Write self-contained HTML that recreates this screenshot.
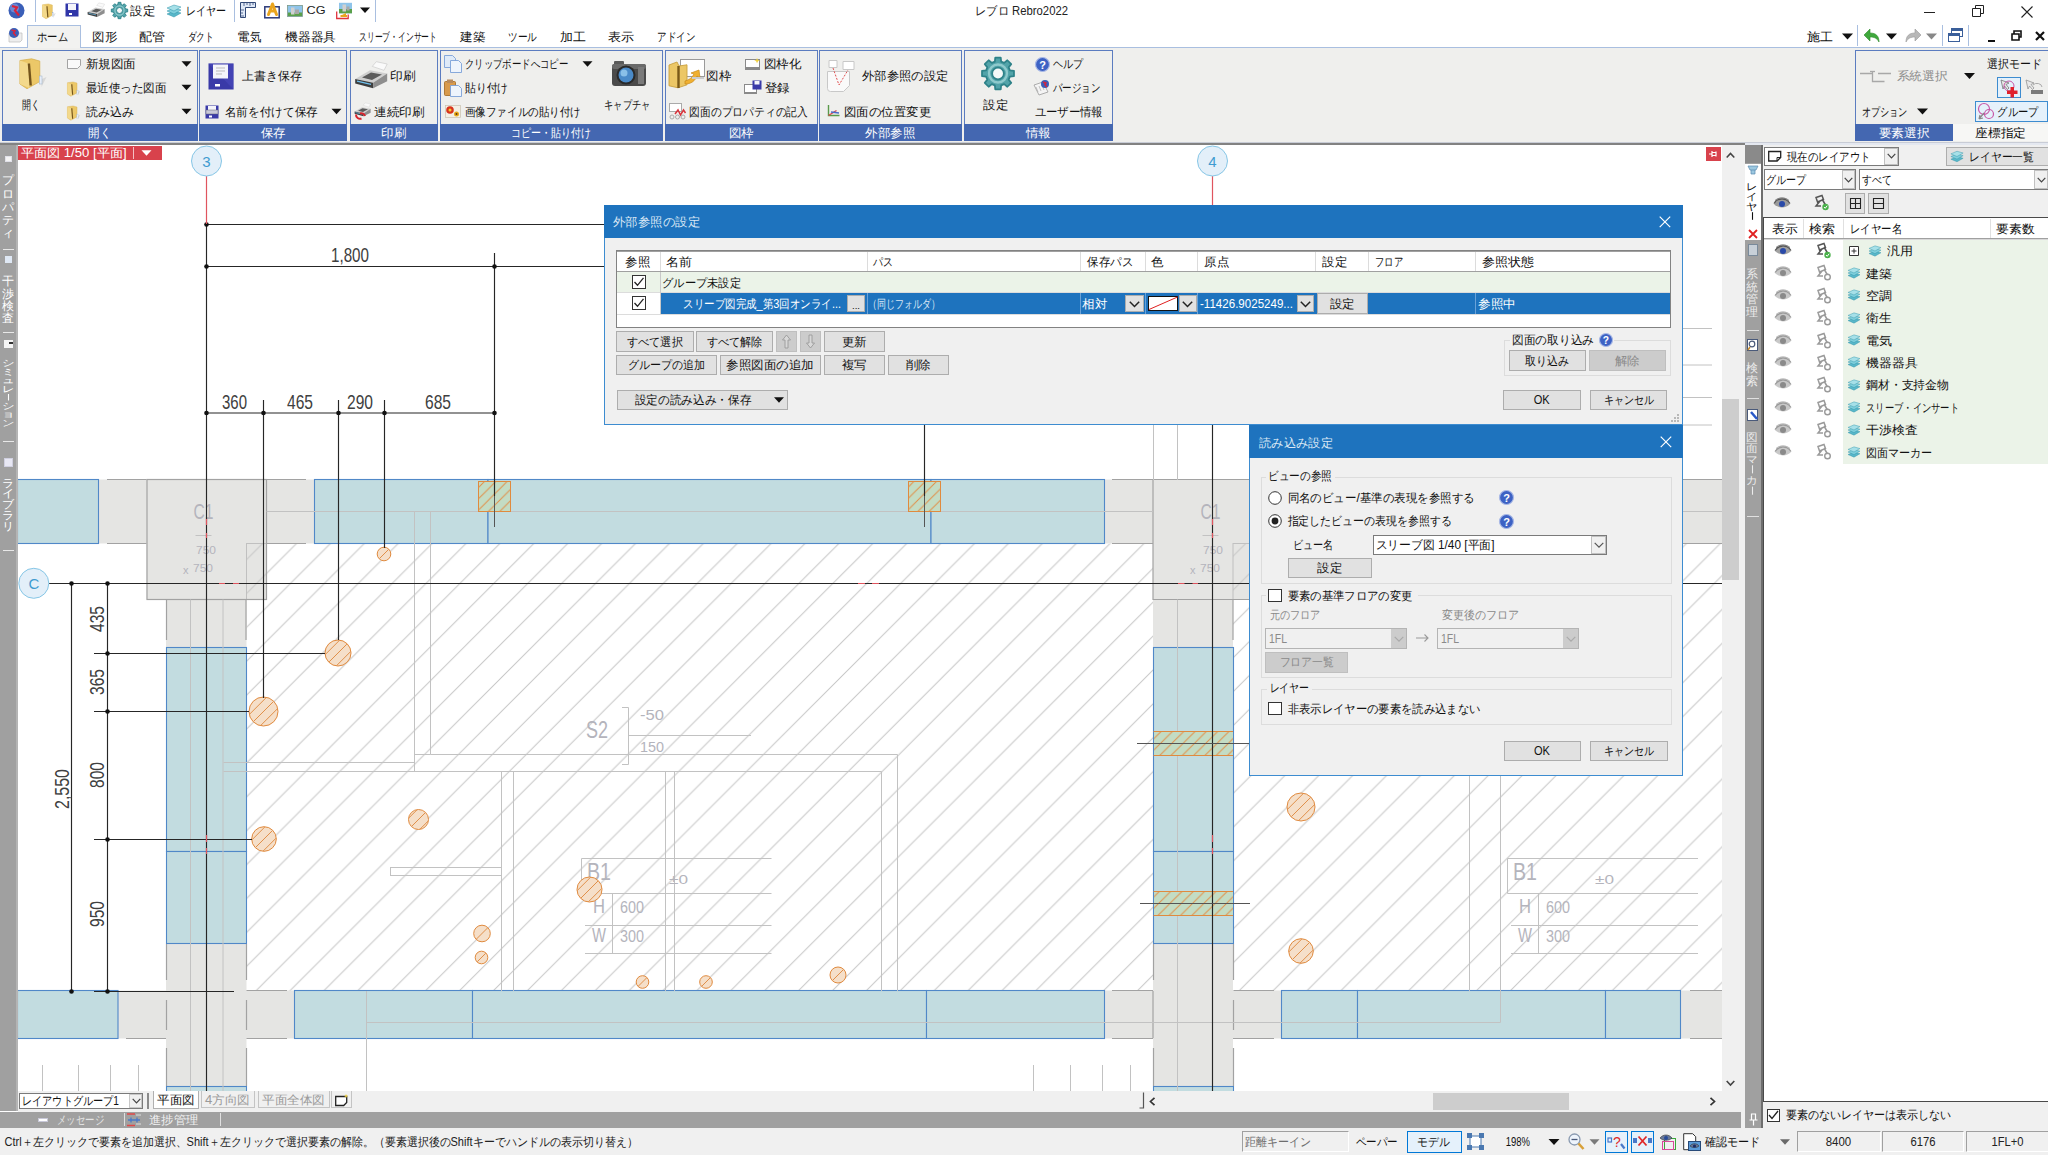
<!DOCTYPE html>
<html lang="ja">
<head>
<meta charset="utf-8">
<title>Rebro2022</title>
<style>
*{box-sizing:border-box;margin:0;padding:0}
html,body{width:2048px;height:1155px;overflow:hidden;background:#fff}
body{position:relative;font-family:"Liberation Sans",sans-serif;font-size:13px;color:#111;line-height:1}
.a{position:absolute}
svg{position:absolute;overflow:visible}
svg.tl{pointer-events:none}
</style>
</head>
<body>
<div class="a" style="left:0px;top:0px;width:2048px;height:24px;background:#fff;"></div>
<svg style="left:8px;top:2px" width="17" height="17"><circle cx="8.500" cy="8.500" r="8" fill="#3a5fb8"/><circle cx="6.500" cy="6" r="4.500" fill="#7f9be0" opacity=".7"/><path d="M4 4l5 1.500-2 3 4 5" stroke="#d8243c" stroke-width="2.200" fill="none"/></svg>
<div class="a" style="left:35px;top:0px;width:1px;height:22px;background:#a9bfe0;"></div>
<div class="a" style="left:234px;top:0px;width:1px;height:22px;background:#a9bfe0;"></div>
<div class="a" style="left:375px;top:0px;width:1px;height:22px;background:#a9bfe0;"></div>
<svg style="left:42px;top:2.5px" width="14" height="16.5" viewBox="0 0 28 33"><path d="M23 22l4.500-2-5 10z" fill="#c8c8c8" opacity=".6"/><path d="M.9 3.500l11.700-1.700 8.200 2.300v20.500l-12.800 7.100-7.100-4.700z" fill="#ecc868" stroke="#d4ac48" stroke-width=".7"/><path d="M.9 3.500l8.500 3 .9 24.500-9.400-4z" fill="#f3d98c"/><path d="M9.900 6.500l1.800 22" stroke="#73541c" stroke-width="2.400"/><rect x="20.300" y="19" width="2.700" height="8" fill="#e8eef8" stroke="#9ab0c8" stroke-width=".5"/></svg>
<svg style="left:65px;top:3px" width="14" height="14"><rect x=".5" y=".5" width="13" height="13" fill="#3036a8"/><rect x="3" y="1" width="8" height="6" fill="#f4f4fa"/><rect x="4" y="10" width="3" height="2" fill="#fff"/></svg>
<svg style="left:87px;top:2px" width="18" height="16"><g transform="scale(.53)"><path d="M18.300 6.400l4-4.700 10.900 2.300-3.200 6.300z" fill="#fafafa" stroke="#c4c4c4" stroke-width=".6"/><path d="M1.200 18.900l14.800-8.600 17.200 3.100-14.100 9.400z" fill="#cfcfcf"/><path d="M8 17.500l9-5 11 2-10 5.500z" fill="#5c5c5c"/><path d="M1.200 18.900l17.900 3.900v5.500l-17.900-4.900z" fill="#3e3e3e"/><path d="M19.100 22.800l14.100-9.400v7.900l-14.100 7z" fill="#8e8e8e"/><path d="M3 21.200l14 3.100" stroke="#6ec0ee" stroke-width="1.300"/></g></svg>
<svg style="left:111px;top:2px" width="17" height="17" viewBox="-8.5 -8.5 17 17"><path d="M6.09 -1.62L8.18 -1.40L8.18 1.40L6.09 1.62L5.45 3.16L6.78 4.79L4.79 6.78L3.16 5.45L1.62 6.09L1.40 8.18L-1.40 8.18L-1.62 6.09L-3.16 5.45L-4.79 6.78L-6.78 4.79L-5.45 3.16L-6.09 1.62L-8.18 1.40L-8.18 -1.40L-6.09 -1.62L-5.45 -3.16L-6.78 -4.79L-4.79 -6.78L-3.16 -5.45L-1.62 -6.09L-1.40 -8.18L1.40 -8.18L1.62 -6.09L3.16 -5.45L4.79 -6.78L6.78 -4.79L5.45 -3.16Z" fill="#52a3a9" stroke="#2e8289" stroke-width=".9" stroke-linejoin="round"/><circle r="4.600" fill="none" stroke="#8fcacd" stroke-width="1.200"/><circle r="3" fill="#f4f8f8" stroke="#2e8289" stroke-width=".9"/></svg>
<svg style="left:166px;top:4px" width="16" height="14"><g stroke="#2f93a8" stroke-width=".5"><path d="M1 10l7-3 7 2-7 4z" fill="#58b7c9"/><path d="M1 7l7-3 7 2-7 4z" fill="#7fcfdc"/><path d="M1 4l7-3 7 2-7 4z" fill="#a6e0e8"/></g></svg>
<svg style="left:240px;top:2px" width="16" height="16"><path d="M.5 .5h15v5h-10v10h-5z" fill="#dfe8f6" stroke="#334a78" stroke-width="1"/><path d="M4 1v3M7 1v2M10 1v3M13 1v2M1 8h3M1 11h2M1 14h3" stroke="#334a78" stroke-width=".8"/></svg>
<svg style="left:264px;top:1px" width="17" height="18"><rect x=".8" y="5.800" width="14.400" height="11" fill="#fff" stroke="#2b3a78" stroke-width="1.500"/><path d="M4.500 13.500l4-10.500 4 10.500M6 10h5" stroke="#eaa51e" stroke-width="3" stroke-linejoin="round" stroke-linecap="round" fill="none"/></svg>
<svg style="left:287px;top:5px" width="16" height="12"><rect x=".5" y=".5" width="15" height="11" fill="#8fc4ea" stroke="#7a9a8a" stroke-width=".8"/><rect x="1" y="7.500" width="14" height="3.500" fill="#5aa04a"/><rect x="4" y="2.500" width="3.500" height="7" fill="#d0d0d0"/><rect x="8" y="4.500" width="4" height="4.500" fill="#a8a8a8"/></svg>
<svg style="left:336px;top:2px" width="17" height="18"><rect x="3" y=".8" width="13" height="10.500" fill="#8fc4ea"/><rect x="3" y="7" width="13" height="4.300" fill="#5aa04a"/><rect x="6.500" y="2.500" width="3.500" height="7" fill="#d0d0d0"/><rect x="10.500" y="4.500" width="3" height="4" fill="#a8a8a8"/><path d="M.7 9.500v7h11.500v-4" fill="none" stroke="#e0343c" stroke-width="1.300"/><path d="M5 13.500l5-2.500v2.500z" fill="#eaa51e"/><path d="M4.500 14h6.500" stroke="#eaa51e" stroke-width="2"/></svg>
<div class="a" style="left:1924px;top:12px;width:11px;height:1px;background:#222;"></div>
<svg style="left:1972px;top:5px" width="13" height="13"><path d="M0.500 3.500h8v8h-8zM3.500 3.500v-3h8v8h-3" fill="none" stroke="#222" stroke-width="1"/></svg>
<svg style="left:2021px;top:6px" width="13" height="13"><path d="M0.500 0.500l11 11M11.500 0.500l-11 11" fill="none" stroke="#222" stroke-width="1.100"/></svg>
<div class="a" style="left:0px;top:24px;width:2048px;height:24px;background:#fff;"></div>
<svg style="left:7px;top:27px" width="17" height="16"><path d="M2 6h13v7l-2 2H2z" fill="#eee" stroke="#bbb" stroke-width=".7"/><circle cx="7" cy="6" r="5" fill="#3a5fb8"/><path d="M4.500 3l3.500 1-1.500 2 2.500 3" stroke="#d8243c" stroke-width="1.600" fill="none"/></svg>
<div class="a" style="left:0px;top:47px;width:2048px;height:1px;background:#a9bfe0;"></div>
<div class="a" style="left:27px;top:25px;width:54px;height:23px;background:#f2f2f0;border:1px solid #a9bfe0;border-bottom:none"></div>
<div class="a" style="left:1857px;top:25px;width:1px;height:21px;background:#a9bfe0;"></div>
<div class="a" style="left:1942px;top:25px;width:1px;height:21px;background:#a9bfe0;"></div>
<div class="a" style="left:1968px;top:25px;width:1px;height:21px;background:#a9bfe0;"></div>
<svg style="left:1863px;top:28px" width="18" height="16"><path d="M1 7l6-6v4c6 0 9 3 9 9-2-4-5-5-9-5v4z" fill="#3fa83c" stroke="#2b8a2a" stroke-width=".6"/></svg>
<svg style="left:1904px;top:28px" width="18" height="16"><path d="M17 7l-6-6v4c-6 0-9 3-9 9 2-4 5-5 9-5v4z" fill="#b8b8b8" stroke="#999" stroke-width=".6"/></svg>
<svg style="left:1948px;top:28px" width="16" height="15"><rect x="3.500" y=".5" width="11" height="8" fill="#fff" stroke="#3a5f9a"/><rect x="3.500" y=".5" width="11" height="2.500" fill="#3a5f9a"/><rect x=".5" y="5.500" width="11" height="8" fill="#fff" stroke="#3a5f9a"/><rect x=".5" y="5.500" width="11" height="2.500" fill="#3a5f9a"/></svg>
<div class="a" style="left:1988px;top:40px;width:7px;height:2px;background:#111;"></div>
<svg style="left:2011px;top:30px" width="12" height="12"><path d="M1 4h7v6h-7zM3 4v-3h7v6h-2" fill="none" stroke="#111" stroke-width="1.600"/></svg>
<svg style="left:2035px;top:31px" width="10" height="10"><path d="M1 1l8 8M9 1l-8 8" stroke="#111" stroke-width="2.200"/></svg>
<div class="a" style="left:0px;top:48px;width:2048px;height:95px;background:#efefed;"></div>
<div class="a" style="left:0px;top:141.5px;width:2048px;height:1.5px;background:#c8ccd6;"></div>
<div class="a" style="left:0px;top:143px;width:1745px;height:2.3px;background:#828282;"></div>
<div class="a" style="left:1745px;top:143px;width:303px;height:2.3px;background:#e4e8f0;"></div>
<div class="a" style="left:1.5px;top:50px;width:196px;height:91px;background:#efefed;border:1px solid #5b7cc0;"></div>
<div class="a" style="left:1.5px;top:124px;width:196px;height:17px;background:#4467b1;"></div>
<div class="a" style="left:199px;top:50px;width:148px;height:91px;background:#efefed;border:1px solid #5b7cc0;"></div>
<div class="a" style="left:199px;top:124px;width:148px;height:17px;background:#4467b1;"></div>
<div class="a" style="left:349.5px;top:50px;width:88.5px;height:91px;background:#efefed;border:1px solid #5b7cc0;"></div>
<div class="a" style="left:349.5px;top:124px;width:88.5px;height:17px;background:#4467b1;"></div>
<div class="a" style="left:440px;top:50px;width:222.5px;height:91px;background:#efefed;border:1px solid #5b7cc0;"></div>
<div class="a" style="left:440px;top:124px;width:222.5px;height:17px;background:#4467b1;"></div>
<div class="a" style="left:664.5px;top:50px;width:153px;height:91px;background:#efefed;border:1px solid #5b7cc0;"></div>
<div class="a" style="left:664.5px;top:124px;width:153px;height:17px;background:#4467b1;"></div>
<div class="a" style="left:819px;top:50px;width:142.5px;height:91px;background:#efefed;border:1px solid #5b7cc0;"></div>
<div class="a" style="left:819px;top:124px;width:142.5px;height:17px;background:#4467b1;"></div>
<div class="a" style="left:963.5px;top:50px;width:149px;height:91px;background:#efefed;border:1px solid #5b7cc0;"></div>
<div class="a" style="left:963.5px;top:124px;width:149px;height:17px;background:#4467b1;"></div>
<svg style="left:19px;top:57px" width="28" height="34"><path d="M23 22l4.500-2-5 10z" fill="#c8c8c8" opacity=".6"/><path d="M.9 3.500l11.700-1.700 8.200 2.300v20.500l-12.800 7.100-7.100-4.700z" fill="#ecc868" stroke="#d4ac48" stroke-width=".7"/><path d="M.9 3.500l8.500 3 .9 24.500-9.400-4z" fill="#f3d98c"/><path d="M9.900 6.500l1.800 22" stroke="#73541c" stroke-width="2.400"/><rect x="20.300" y="19" width="2.700" height="8" fill="#e8eef8" stroke="#9ab0c8" stroke-width=".5"/></svg>
<svg style="left:67px;top:59px" width="14" height="10"><path d="M.5 .5h13v6l-3 3h-10z" fill="#fafafa" stroke="#9a9a9a" stroke-width=".9"/></svg>
<svg style="left:67px;top:80.5px" width="13.5" height="16" viewBox="0 0 28 33"><path d="M23 22l4.500-2-5 10z" fill="#c8c8c8" opacity=".6"/><path d="M.9 3.500l11.700-1.700 8.200 2.300v20.500l-12.800 7.100-7.100-4.700z" fill="#ecc868" stroke="#d4ac48" stroke-width=".7"/><path d="M.9 3.500l8.500 3 .9 24.500-9.400-4z" fill="#f3d98c"/><path d="M9.900 6.500l1.800 22" stroke="#73541c" stroke-width="2.400"/><rect x="20.300" y="19" width="2.700" height="8" fill="#e8eef8" stroke="#9ab0c8" stroke-width=".5"/></svg>
<svg style="left:67px;top:104.5px" width="13.5" height="16" viewBox="0 0 28 33"><path d="M23 22l4.500-2-5 10z" fill="#c8c8c8" opacity=".6"/><path d="M.9 3.500l11.700-1.700 8.200 2.300v20.500l-12.800 7.100-7.100-4.700z" fill="#ecc868" stroke="#d4ac48" stroke-width=".7"/><path d="M.9 3.500l8.500 3 .9 24.500-9.400-4z" fill="#f3d98c"/><path d="M9.900 6.500l1.800 22" stroke="#73541c" stroke-width="2.400"/><rect x="20.300" y="19" width="2.700" height="8" fill="#e8eef8" stroke="#9ab0c8" stroke-width=".5"/></svg>
<svg style="left:208px;top:62.5px" width="26" height="27"><rect x=".5" y=".5" width="25" height="26" fill="#3a3aa8"/><path d="M.5 .5h25v26z" fill="#4c4cc0" opacity=".5"/><rect x="5" y="1.500" width="15" height="14" fill="#f4f4fa"/><path d="M8 5h9M8 8h9M8 11h6" stroke="#bbb" stroke-width="1"/><rect x="7" y="21" width="5" height="2.500" fill="#fff"/></svg>
<svg style="left:205px;top:104.5px" width="14" height="14"><rect x=".5" y=".5" width="13" height="13" fill="#3a3aa8"/><rect x="3" y="1" width="8" height="5" fill="#f4f4fa"/><rect x="1" y="5" width="12" height="4" fill="#c8c8d8" stroke="#667" stroke-width=".5"/><rect x="4" y="10.500" width="3" height="2" fill="#fff"/></svg>
<svg style="left:354px;top:60px" width="34" height="30"><path d="M18.300 6.400l4-4.700 10.900 2.300-3.200 6.300z" fill="#fafafa" stroke="#c4c4c4" stroke-width=".6"/><path d="M1.200 18.900l14.800-8.600 17.200 3.100-14.100 9.400z" fill="#cfcfcf"/><path d="M8 17.500l9-5 11 2-10 5.500z" fill="#5c5c5c"/><path d="M1.200 18.900l17.900 3.900v5.500l-17.900-4.900z" fill="#3e3e3e"/><path d="M19.100 22.800l14.100-9.400v7.900l-14.100 7z" fill="#8e8e8e"/><path d="M3 21.200l14 3.100" stroke="#6ec0ee" stroke-width="1.300"/></svg>
<svg style="left:354px;top:103px" width="17" height="17"><g transform="scale(.5) translate(0 -2)"><path d="M18.300 6.400l4-4.700 10.900 2.300-3.200 6.300z" fill="#fafafa" stroke="#c4c4c4" stroke-width=".6"/><path d="M1.200 18.900l14.800-8.600 17.200 3.100-14.100 9.400z" fill="#cfcfcf"/><path d="M8 17.500l9-5 11 2-10 5.500z" fill="#5c5c5c"/><path d="M1.200 18.900l17.900 3.900v5.500l-17.900-4.900z" fill="#3e3e3e"/><path d="M19.100 22.800l14.100-9.400v7.900l-14.100 7z" fill="#8e8e8e"/><path d="M3 21.200l14 3.100" stroke="#6ec0ee" stroke-width="1.300"/></g><path d="M2 11.500a4 4 0 0 0 5.500 4M11 13a4 4 0 0 0-5-2.500" stroke="#d8242c" stroke-width="2" fill="none"/></svg>
<svg style="left:444px;top:55px" width="19" height="18"><path d="M.5 .5h8l3 3v9h-11z" fill="#dfeaf8" stroke="#7aa0d8" stroke-width=".9"/><path d="M6.500 5.500h8l3 3v9h-11z" fill="#eef4fc" stroke="#7aa0d8" stroke-width=".9"/></svg>
<svg style="left:444px;top:79px" width="19" height="18"><rect x=".5" y="2.500" width="11" height="14" rx="1" fill="#d89a4c" stroke="#a8702c" stroke-width=".9"/><rect x="3" y=".5" width="6" height="3.500" fill="#b88a5c"/><path d="M6.500 6.500h8l3 3v8h-11z" fill="#eef4fc" stroke="#7aa0d8" stroke-width=".9"/></svg>
<svg style="left:445px;top:105px" width="16" height="13"><rect x=".5" y=".5" width="15" height="12" fill="#f4efe4" stroke="#c8c0b0" stroke-width=".7"/><circle cx="5" cy="5" r="3.800" fill="#d8341c"/><circle cx="5" cy="5" r="1.500" fill="#f8c838"/><circle cx="11.500" cy="9" r="2.500" fill="#e8a818"/><circle cx="11.500" cy="9" r="1" fill="#5a3a10"/></svg>
<svg style="left:611px;top:59px" width="36" height="28"><rect x="1" y="5" width="34" height="22" rx="3" fill="#4a4a4a"/><rect x="3" y="2" width="10" height="5" rx="1" fill="#5a5a5a"/><rect x="1" y="5" width="34" height="5" rx="2" fill="#6a6a6a"/><rect x="27" y="8" width="6" height="17" fill="#7a7a7a"/><circle cx="15" cy="16" r="9.500" fill="#2a2a2a"/><circle cx="15" cy="16" r="7.500" fill="#4a8ac8"/><circle cx="13" cy="14" r="3.500" fill="#8ac0e8"/></svg>
<svg style="left:668px;top:57px" width="38" height="36"><rect x="12.500" y="2.500" width="24" height="17" fill="#fff" stroke="#9a9a9a"/><path d="M1 8l8-3 2 4 8-1.200v20l-9 3-9-2z" fill="#ecc766" stroke="#c9a040" stroke-width=".9"/><path d="M10.500 9v22" stroke="#7a5a18" stroke-width="2.400"/><path d="M17 24c4-1 7-3 9-7l-3-1 8-3 1 8-3-2c-2 5-6 8-12 8z" fill="#f0b030" stroke="#c88a18" stroke-width=".7"/><rect x="24" y="20" width="12" height="2" fill="#ccc"/></svg>
<svg style="left:745px;top:58px" width="16" height="13"><rect x=".5" y="1.500" width="14" height="10" fill="#fff" stroke="#8a8a8a"/><rect x="1" y="9" width="13" height="2" fill="#8a8a8a"/><path d="M12 0l1 2 2 .5-2 .8-1 2-.8-2-2-.8 2-.5z" fill="#f0d040"/></svg>
<svg style="left:744px;top:80px" width="18" height="16"><rect x=".5" y="4.500" width="12" height="9" fill="#fff" stroke="#8a8a8a"/><rect x="1" y="12" width="11" height="2" fill="#8a8a8a"/><rect x="8.500" y=".5" width="9" height="9" fill="#3a3aa8"/><rect x="10.500" y="1" width="5" height="3.500" fill="#f4f4fa"/></svg>
<svg style="left:669px;top:103px" width="18" height="17"><rect x=".5" y=".5" width="12" height="8" fill="#fff" stroke="#aaa"/><path d="M6 11l3-4 2.500 5 3-5 2 3" stroke="#d8343c" stroke-width="1.500" fill="none"/><circle cx="3" cy="14" r="2" fill="none" stroke="#aaa"/><circle cx="8.500" cy="14" r="2" fill="none" stroke="#aaa"/><circle cx="14" cy="14" r="2" fill="none" stroke="#aaa"/></svg>
<svg style="left:826px;top:59px" width="30" height="34"><path d="M1.500 12.500v17a3 3 0 0 0 3 3h13l6-6v-14z" fill="#fafafa" stroke="#c8c8c8"/><path d="M3 1.500h8v7h-8z" fill="#fff" stroke="#c8c8c8"/><path d="M17 2.500h11v8h-11z" fill="#fff" stroke="#c8c8c8"/><path d="M7 9l6 17 9-15" stroke="#e05050" stroke-width="1" stroke-dasharray="2 1.500" fill="none"/></svg>
<svg style="left:826px;top:104px" width="15" height="14"><path d="M2.500 1v10.500h11" stroke="#5a9a4a" stroke-width="1.400" fill="none"/><path d="M2.500 11.500l8-5" stroke="#d84a4a" stroke-width="1.400"/><path d="M5 8l8 1" stroke="#4a6ac8" stroke-width="1.400"/></svg>
<svg style="left:980.5px;top:56px" width="34" height="35" viewBox="-8.7 -8.9 17.4 17.8"><path d="M6.09 -1.62L8.18 -1.40L8.18 1.40L6.09 1.62L5.45 3.16L6.78 4.79L4.79 6.78L3.16 5.45L1.62 6.09L1.40 8.18L-1.40 8.18L-1.62 6.09L-3.16 5.45L-4.79 6.78L-6.78 4.79L-5.45 3.16L-6.09 1.62L-8.18 1.40L-8.18 -1.40L-6.09 -1.62L-5.45 -3.16L-6.78 -4.79L-4.79 -6.78L-3.16 -5.45L-1.62 -6.09L-1.40 -8.18L1.40 -8.18L1.62 -6.09L3.16 -5.45L4.79 -6.78L6.78 -4.79L5.45 -3.16Z" fill="#52a3a9" stroke="#2e8289" stroke-width=".9" stroke-linejoin="round"/><circle r="4.600" fill="none" stroke="#8fcacd" stroke-width="1.200"/><circle r="3" fill="#f4f8f8" stroke="#2e8289" stroke-width=".9"/></svg>
<svg style="left:1034.5px;top:57px" width="15" height="15"><circle cx="7.500" cy="7.500" r="7" fill="#3d62c4" stroke="#a9b9e6" stroke-width="1.200"/><text x="7.500" y="11.500" font-size="11" font-weight="bold" fill="#fff" text-anchor="middle" font-family="Liberation Sans, sans-serif">?</text></svg>
<svg style="left:1033px;top:79px" width="18" height="17"><path d="M1 6l9-3 5 10-9 3z" fill="#f4f4f4" stroke="#9a9a9a" stroke-width=".8"/><path d="M3 8l2 5M6 7l2 5M9 6l2 5" stroke="#aaa" stroke-width=".7"/><circle cx="12" cy="5" r="4" fill="#3a5fb8"/><path d="M10 3l3 1-1.200 1.500 2 2.500" stroke="#d8243c" stroke-width="1.400" fill="none"/></svg>
<div class="a" style="left:1855px;top:50px;width:194px;height:91px;background:#efefed;border:1px solid #5b7cc0;"></div>
<div class="a" style="left:1855px;top:124px;width:98px;height:17px;background:#4467b1;"></div>
<div class="a" style="left:1953px;top:124px;width:95px;height:16.5px;background:#f7f7f5;"></div>
<svg style="left:1860px;top:68px" width="32" height="16"><path d="M0 5.500h12M18 5.500h13M12.500 3v10.500h12" stroke="#a8a8a8" stroke-width="1.300" fill="none"/><path d="M10 3.500h5" stroke="#a8a8a8" stroke-width="1.300"/></svg>
<div class="a" style="left:1996.5px;top:77px;width:24px;height:21px;background:#e5f1fb;border:1px solid #3d8cd0;"></div>
<svg style="left:1999px;top:79px" width="20" height="18"><path d="M2 1l8 3-3 1.500 3 3.500-1.500 1.500-3-3.500-1.500 3z" fill="#e8e8e8" stroke="#666" stroke-width=".7"/><circle cx="10" cy="7" r="5" fill="none" stroke="#c858a8" stroke-width="1"/><path d="M8 11.500h3.500v-3.500h3.500v3.500h3.500v3.500h-3.500v3.500h-3.500v-3.500h-3.500z" fill="#e0202c"/></svg>
<svg style="left:2024px;top:79px" width="20" height="16"><path d="M2 1l8 3-3 1.500 3 3.500-1.500 1.500-3-3.500-1.500 3z" fill="#e8e8e8" stroke="#888" stroke-width=".7"/><path d="M9 6a5 4 0 0 1 9 2" stroke="#aaa" stroke-width="1" fill="none"/><rect x="7" y="11" width="12" height="4" fill="#7a7a7a"/></svg>
<div class="a" style="left:1975px;top:100.5px;width:72.5px;height:21px;background:#e5f1fb;border:1px solid #3d8cd0;"></div>
<svg style="left:1977px;top:102px" width="18" height="18"><circle cx="7" cy="7" r="5.500" fill="none" stroke="#c858a8" stroke-width="1.200"/><circle cx="12" cy="12" r="4.500" fill="none" stroke="#c858a8" stroke-width="1.200"/><path d="M2 17l5-6M2 17l1-4M2 17l4-1" stroke="#888" stroke-width="1.200" fill="none"/></svg>
<svg class="tl" width="2048" height="1155" style="left:0;top:0" font-family="Liberation Sans, sans-serif" font-size="13" fill="#111">
<text x="130" y="14.66" textLength="25" lengthAdjust="spacingAndGlyphs" font-size="12.48">設定</text>
<text x="186" y="14.66" textLength="40" lengthAdjust="spacingAndGlyphs" font-size="12.48">レイヤー</text>
<text x="306.5" y="14.236" textLength="19" lengthAdjust="spacingAndGlyphs" fill="#222" font-size="11.81">CG</text>
<path d="M360 7.55h10l-5 5.5z" fill="#111"/>
<text x="975" y="15" textLength="93" lengthAdjust="spacingAndGlyphs" fill="#222" font-size="12">レブロ Rebro2022</text>
<text x="37" y="40.66" textLength="31" lengthAdjust="spacingAndGlyphs" font-size="12.48">ホーム</text>
<text x="92" y="40.66" textLength="25" lengthAdjust="spacingAndGlyphs" font-size="12.48">図形</text>
<text x="139" y="40.66" textLength="26" lengthAdjust="spacingAndGlyphs" font-size="12.48">配管</text>
<text x="187.5" y="40.66" textLength="26.5" lengthAdjust="spacingAndGlyphs" font-size="12.48">ダクト</text>
<text x="237" y="40.66" textLength="25" lengthAdjust="spacingAndGlyphs" font-size="12.48">電気</text>
<text x="285" y="40.66" textLength="51" lengthAdjust="spacingAndGlyphs" font-size="12.48">機器器具</text>
<text x="359" y="40.66" textLength="78" lengthAdjust="spacingAndGlyphs" font-size="12.48">スリーブ・インサート</text>
<text x="460" y="40.66" textLength="25" lengthAdjust="spacingAndGlyphs" font-size="12.48">建築</text>
<text x="508" y="40.66" textLength="29" lengthAdjust="spacingAndGlyphs" font-size="12.48">ツール</text>
<text x="560" y="40.66" textLength="26" lengthAdjust="spacingAndGlyphs" font-size="12.48">加工</text>
<text x="608" y="40.66" textLength="26" lengthAdjust="spacingAndGlyphs" font-size="12.48">表示</text>
<text x="657" y="40.66" textLength="38" lengthAdjust="spacingAndGlyphs" font-size="12.48">アドイン</text>
<text x="1807" y="40.66" textLength="26" lengthAdjust="spacingAndGlyphs" font-size="12.48">施工</text>
<path d="M1842 33.475h11l-5.5 6.05z" fill="#111"/>
<path d="M1886 33.475h11l-5.5 6.05z" fill="#111"/>
<path d="M1926 33.475h11l-5.5 6.05z" fill="#888"/>
<text x="88" y="136.86" textLength="23" lengthAdjust="spacingAndGlyphs" fill="#fff" font-size="12.48">開く</text>
<text x="260.5" y="136.86" textLength="25" lengthAdjust="spacingAndGlyphs" fill="#fff" font-size="12.48">保存</text>
<text x="381.25" y="136.86" textLength="25" lengthAdjust="spacingAndGlyphs" fill="#fff" font-size="12.48">印刷</text>
<text x="511.25" y="136.86" textLength="80" lengthAdjust="spacingAndGlyphs" fill="#fff" font-size="12.48">コピー・貼り付け</text>
<text x="728.5" y="136.86" textLength="25" lengthAdjust="spacingAndGlyphs" fill="#fff" font-size="12.48">図枠</text>
<text x="865.25" y="136.86" textLength="50" lengthAdjust="spacingAndGlyphs" fill="#fff" font-size="12.48">外部参照</text>
<text x="1025.5" y="136.86" textLength="25" lengthAdjust="spacingAndGlyphs" fill="#fff" font-size="12.48">情報</text>
<text x="22" y="108.66" textLength="18" lengthAdjust="spacingAndGlyphs" font-size="12.48">開く</text>
<text x="85.5" y="68.16" textLength="50.5" lengthAdjust="spacingAndGlyphs" font-size="12.48">新規図面</text>
<text x="85.5" y="91.66" textLength="81" lengthAdjust="spacingAndGlyphs" font-size="12.48">最近使った図面</text>
<text x="85.5" y="115.66" textLength="48" lengthAdjust="spacingAndGlyphs" font-size="12.48">読み込み</text>
<path d="M181.5 61.25h10l-5 5.5z" fill="#111"/>
<path d="M181.5 84.75h10l-5 5.5z" fill="#111"/>
<path d="M181.5 108.75h10l-5 5.5z" fill="#111"/>
<text x="242" y="80.16" textLength="60" lengthAdjust="spacingAndGlyphs" font-size="12.48">上書き保存</text>
<text x="224.8" y="115.66" textLength="93" lengthAdjust="spacingAndGlyphs" font-size="12.48">名前を付けて保存</text>
<path d="M331.5 108.75h10l-5 5.5z" fill="#111"/>
<text x="390.4" y="79.66" textLength="25.6" lengthAdjust="spacingAndGlyphs" font-size="12.48">印刷</text>
<text x="374" y="115.66" textLength="50.6" lengthAdjust="spacingAndGlyphs" font-size="12.48">連続印刷</text>
<text x="464.8" y="68.16" textLength="103.4" lengthAdjust="spacingAndGlyphs" font-size="12.48">クリップボードへコピー</text>
<path d="M582.5 61.25h10l-5 5.5z" fill="#111"/>
<text x="464.8" y="91.66" textLength="43.6" lengthAdjust="spacingAndGlyphs" font-size="12.48">貼り付け</text>
<text x="464.8" y="115.66" textLength="116.2" lengthAdjust="spacingAndGlyphs" font-size="12.48">画像ファイルの貼り付け</text>
<text x="604" y="109.16" textLength="46.3" lengthAdjust="spacingAndGlyphs" font-size="12.48">キャプチャ</text>
<text x="706.4" y="79.66" textLength="25" lengthAdjust="spacingAndGlyphs" font-size="12.48">図枠</text>
<text x="763.8" y="68.16" textLength="37.6" lengthAdjust="spacingAndGlyphs" font-size="12.48">図枠化</text>
<text x="764.5" y="92.16" textLength="25" lengthAdjust="spacingAndGlyphs" font-size="12.48">登録</text>
<text x="689.3" y="115.66" textLength="118.6" lengthAdjust="spacingAndGlyphs" font-size="12.48">図面のプロパティの記入</text>
<text x="862" y="79.66" textLength="86.5" lengthAdjust="spacingAndGlyphs" font-size="12.48">外部参照の設定</text>
<text x="844" y="115.66" textLength="87.3" lengthAdjust="spacingAndGlyphs" font-size="12.48">図面の位置変更</text>
<text x="983" y="109.16" textLength="25" lengthAdjust="spacingAndGlyphs" font-size="12.48">設定</text>
<text x="1053" y="68.16" textLength="30.4" lengthAdjust="spacingAndGlyphs" font-size="12.48">ヘルプ</text>
<text x="1053" y="92.16" textLength="47.4" lengthAdjust="spacingAndGlyphs" font-size="12.48">バージョン</text>
<text x="1034.5" y="115.66" textLength="68.3" lengthAdjust="spacingAndGlyphs" font-size="12.48">ユーザー情報</text>
<text x="1878.5" y="136.86" textLength="51" lengthAdjust="spacingAndGlyphs" fill="#fff" font-size="12.48">要素選択</text>
<text x="1975" y="136.86" textLength="51" lengthAdjust="spacingAndGlyphs" font-size="12.48">座標指定</text>
<text x="1896.5" y="80.16" textLength="51.3" lengthAdjust="spacingAndGlyphs" fill="#8c8c8c" font-size="12.48">系統選択</text>
<path d="M1964 72.975h11l-5.5 6.05z" fill="#111"/>
<text x="1987" y="68.16" textLength="54.8" lengthAdjust="spacingAndGlyphs" font-size="12.48">選択モード</text>
<text x="1861.7" y="115.66" textLength="46" lengthAdjust="spacingAndGlyphs" font-size="12.48">オプション</text>
<path d="M1917 108.475h11l-5.5 6.05z" fill="#111"/>
<text x="1997.4" y="115.66" textLength="41" lengthAdjust="spacingAndGlyphs" font-size="12.48">グループ</text>
</svg>
<svg id="dw" style="left:18px;top:145px;overflow:hidden" width="1704" height="946" viewBox="18 145 1704 946">
<defs>
<pattern id="hat" width="33.9" height="33.9" patternUnits="userSpaceOnUse" patternTransform="translate(26.4 0)">
<path d="M-1 34.9L34.9 -1M-1 1L1 -1M32.9 34.9L34.9 32.9" stroke="#c6c6c6" stroke-width="1" fill="none"/>
</pattern>
<pattern id="oh2" width="11.3" height="11.3" patternUnits="userSpaceOnUse" patternTransform="translate(5.5 0)">
<path d="M-1 12.3L12.3 -1M-1 1L1 -1M10.3 12.3L12.3 10.3" stroke="#e0904a" stroke-width="1" fill="none"/>
</pattern>
</defs>
<rect x="18" y="145" width="1704" height="945" fill="#fff"/>
<!-- slab hatch -->
<path d="M246.5 543.5H1153V991H246.5zM1233 543.5H1722V991H1233z" fill="url(#hat)"/>
<!-- gray concrete -->
<g fill="#e5e5e3" stroke="none">
<rect x="99" y="479.5" width="216" height="64"/>
<rect x="146.5" y="479.5" width="120" height="120"/>
<rect x="166" y="599" width="80.5" height="49"/>
<rect x="166" y="943.5" width="80.5" height="147"/>
<rect x="118" y="990.5" width="177" height="48"/>
<rect x="1104.5" y="479.5" width="49" height="64"/>
<rect x="1153" y="479.5" width="120" height="120"/>
<rect x="1153" y="599" width="80" height="49"/>
<rect x="1153" y="943.5" width="80" height="147"/>
<rect x="1104.5" y="990.5" width="177" height="48"/>
<rect x="1680" y="990.5" width="42" height="48"/>
<rect x="1273" y="479.5" width="449" height="64"/>
</g>
<!-- hatch in column corner -->
<rect x="246.5" y="543.5" width="20" height="56" fill="url(#hat)" stroke="#c0c0c0" stroke-width="1"/>
<rect x="1233" y="543.5" width="20" height="56" fill="url(#hat)" stroke="#c0c0c0" stroke-width="1"/>
<!-- gray outlines -->
<g fill="none" stroke="#a2a2a2" stroke-width="1.2">
<path d="M107 479.5H146.5M107 543.5H146.5M266.5 479.5H306M266.5 543.5H306"/>
<rect x="147" y="479.5" width="119.5" height="120"/>
<path d="M166.5 599.5V640M246 599.5V640"/>
<path d="M1112 479.5H1153M1112 543.5H1153"/>
<path d="M1153 479.5H1273M1153 479.5V599.5H1273"/>
<path d="M1233 599.5V640"/>
<path d="M126 1038.5H166M246.5 1038.5H287M1112 1038.5H1153M1233 1038.5H1274M1153 991V1038"/>
<path d="M1690 990.5H1722M1690 1038.5H1722"/>
<path d="M1273 479.5H1722M1273 543.5H1722"/>
<path d="M166.5 944V980M166.5 1000V1030M166.5 1048V1086M246.5 944V980M246.5 1000V1030M246.5 1048V1086M246.5 990.5H287M1153.5 944V980M1153.5 1048V1086M1233.500 944V980M1233.500 1000V1030M1233.500 1048V1086M1233.500 990.5H1274M1112 990.5H1153"/>
</g>
<!-- blue beams -->
<g fill="#c2dce0" stroke="#5088c8" stroke-width="1.1">
<rect x="17.5" y="479.5" width="81" height="64"/>
<rect x="314.5" y="479.5" width="173.5" height="64"/>
<rect x="488" y="479.5" width="443" height="64"/>
<rect x="931" y="479.5" width="173.5" height="64"/>
<rect x="166.5" y="647.5" width="80" height="204"/>
<rect x="166.5" y="851.5" width="80" height="92"/>
<rect x="166.5" y="1086.5" width="80" height="10"/>
<rect x="1153.5" y="647.5" width="80" height="204"/>
<rect x="1153.5" y="851.5" width="80" height="92"/>
<rect x="1153.5" y="1086.5" width="80" height="10"/>
<rect x="17.5" y="990.5" width="100.5" height="48"/>
<rect x="294.5" y="990.5" width="178" height="48"/>
<rect x="472.5" y="990.5" width="454" height="48"/>
<rect x="926.5" y="990.5" width="178" height="48"/>
<rect x="1281.5" y="990.5" width="76" height="48"/>
<rect x="1357.5" y="990.5" width="248" height="48"/>
<rect x="1605.5" y="990.5" width="75" height="48"/>
</g>
<!-- light reference lines -->
<g fill="none" stroke="#c2c2c2" stroke-width="1">
<path d="M266.5 511.5H1153M1273 511.5H1722"/>
<path d="M1600 328.5H1712M1600 365H1712M1600 397.5H1712M1600 425H1712"/>
<path d="M190.5 599.5V1091M223 599.5V1091"/>
<path d="M1177.5 424V480M1153.5 424V480M1177.5 599.5V1091"/>
<path d="M414.5 754.5H430.5M414.5 511.5V771.5M430.5 511.5V754.5H897.5V991M223.5 762.5H414.5M223.5 771.5H881.5V991"/>
<path d="M501.5 771.5V991M513.5 771.5V991M665.5 771.5V991M674.5 771.5V991"/>
<rect x="390.5" y="867.5" width="111" height="8"/>
<path d="M366.5 991V1091M366.5 1022.5H1500.5V776"/>
<path d="M1469.5 776V991"/>
<path d="M42.5 1065V1091M78.5 1065V1091M110.5 1065V1091M138.5 1065V1091"/>
<path d="M1033.5 1065V1091M1070.5 1065V1091M1102.5 1065V1091M1130.5 1065V1091"/>
<!-- S2 label -->
<path d="M622 707.5H628.5V764.5H622M628.5 735.5H751"/>
<!-- B1 tables -->
<path d="M771.5 858.5H581.5V893.5H771.5M585 925.5H771.5M585 953.5H771.5M612.5 893.5V953.5"/>
<path d="M1698 858.5H1507.5V893.5H1698M1511 925.5H1698M1511 953.5H1698M1538.5 893.5V953.5"/>
<path d="M195.5 535.5H211.5M1202.5 535.5H1218.5"/>
</g>
<!-- label text (light gray) -->
<g fill="#b4b4bc" font-family="Liberation Sans, sans-serif">
<text x="193.5" y="519" font-size="22" textLength="20" lengthAdjust="spacingAndGlyphs">C1</text>
<text x="196" y="554" font-size="11" textLength="20" lengthAdjust="spacingAndGlyphs">750</text>
<text x="183" y="574" font-size="11">x</text>
<text x="193" y="572" font-size="11" textLength="20" lengthAdjust="spacingAndGlyphs">750</text>
<text x="1200.5" y="519" font-size="22" textLength="20" lengthAdjust="spacingAndGlyphs">C1</text>
<text x="1203" y="554" font-size="11" textLength="20" lengthAdjust="spacingAndGlyphs">750</text>
<text x="1190" y="574" font-size="11">x</text>
<text x="1200" y="572" font-size="11" textLength="20" lengthAdjust="spacingAndGlyphs">750</text>
<text x="586" y="737.5" font-size="23" textLength="22" lengthAdjust="spacingAndGlyphs">S2</text>
<text x="640" y="720" font-size="15" textLength="24" lengthAdjust="spacingAndGlyphs">-50</text>
<text x="640" y="752" font-size="15" textLength="24" lengthAdjust="spacingAndGlyphs">150</text>
<text x="587" y="879.5" font-size="23" textLength="24" lengthAdjust="spacingAndGlyphs">B1</text>
<text x="669" y="884" font-size="12" textLength="19" lengthAdjust="spacingAndGlyphs">±0</text>
<text x="593" y="913" font-size="20" textLength="12" lengthAdjust="spacingAndGlyphs">H</text>
<text x="620" y="913" font-size="16" textLength="24" lengthAdjust="spacingAndGlyphs">600</text>
<text x="592" y="941.5" font-size="20" textLength="14" lengthAdjust="spacingAndGlyphs">W</text>
<text x="620" y="942" font-size="16" textLength="24" lengthAdjust="spacingAndGlyphs">300</text>
<text x="1513" y="879.5" font-size="23" textLength="24" lengthAdjust="spacingAndGlyphs">B1</text>
<text x="1595" y="884" font-size="12" textLength="19" lengthAdjust="spacingAndGlyphs">±0</text>
<text x="1519" y="913" font-size="20" textLength="12" lengthAdjust="spacingAndGlyphs">H</text>
<text x="1546" y="913" font-size="16" textLength="24" lengthAdjust="spacingAndGlyphs">600</text>
<text x="1518" y="941.5" font-size="20" textLength="14" lengthAdjust="spacingAndGlyphs">W</text>
<text x="1546" y="942" font-size="16" textLength="24" lengthAdjust="spacingAndGlyphs">300</text>
</g>
<!-- orange sleeves -->
<g fill="#f5dfc9" stroke="#e08a3e" stroke-width="1">
<circle cx="384" cy="554" r="6.8"/>
<circle cx="338" cy="653" r="13"/>
<circle cx="263.5" cy="711.5" r="14.5"/>
<circle cx="418.5" cy="819.5" r="10"/>
<circle cx="264" cy="839" r="12.3"/>
<circle cx="589.5" cy="889.5" r="12.5"/>
<circle cx="482" cy="933.5" r="8.3"/>
<circle cx="481.5" cy="957.5" r="6.3"/>
<circle cx="642.5" cy="982" r="6.3"/>
<circle cx="706" cy="982" r="6.3"/>
<circle cx="838" cy="975" r="8"/>
<circle cx="1301" cy="807" r="14"/>
<circle cx="1301" cy="951" r="12.3"/>
</g>
<path d="M379.5 558.5L388.5 549.5M325.4 654.4L339.4 640.4M329.1 661.9L346.9 644.1M336.6 665.6L350.6 651.6M249.6 714.2L266.2 697.6M253.5 721.5L273.5 701.5M260.8 725.4L277.4 708.8M408.9 817.9L416.9 809.9M411.7 826.3L425.3 812.7M420.1 829.1L428.1 821.1M252.0 839.8L264.8 827.0M255.6 847.4L272.4 830.6M263.2 851.0L276.0 838.2M577.3 890.5L590.5 877.3M580.9 898.1L598.1 880.9M588.5 901.7L601.7 888.5M476.4 939.1L487.6 927.9M477.3 961.7L485.7 953.3M638.3 986.2L646.7 977.8M701.8 986.2L710.2 977.8M832.6 980.4L843.4 969.6M1287.5 809.3L1303.3 793.5M1291.4 816.6L1310.6 797.4M1298.7 820.5L1314.5 804.7M1289.0 951.8L1301.8 939.0M1292.6 959.4L1309.4 942.6M1300.2 963.0L1313.0 950.2" stroke="#e0904a" stroke-width="1" fill="none"/>
<g fill="#c3dcc4" stroke="#e08a3e" stroke-width="1">
<rect x="478.5" y="481.5" width="32" height="30"/>
<rect x="908.5" y="481.5" width="32" height="30"/>
<path d="M1153.5 731.5H1233M1153.5 755.5H1233M1153.5 891.5H1233M1153.5 915.5H1233" fill="none"/>
</g>
<rect x="1154" y="732" width="79" height="23" fill="#c3dcc4"/>
<rect x="1154" y="892" width="79" height="23" fill="#c3dcc4"/>
<g fill="url(#oh2)" stroke="none">
<rect x="478.5" y="481.5" width="32" height="30"/>
<rect x="908.5" y="481.5" width="32" height="30"/>
<rect x="1154" y="732" width="79" height="23"/>
<rect x="1154" y="892" width="79" height="23"/>
</g>
<!-- grid lines & dimensions (black) -->
<g fill="none" stroke="#262626" stroke-width="1.15">
<path d="M206.5 224V1091"/>
<path d="M1212.5 424V1091"/>
<path d="M49 583.5H1722"/>
<path d="M206 224.5H604M206 266.5H604M494.5 253V496"/>
<path d="M206 413H494.5M263.5 400V698M338.5 400V640M384.5 400V548"/>
<path d="M924.5 424V496"/>
<path d="M71.5 583.5V991M107.5 583.5V991"/>
<path d="M94 653.5H325M94 711.5H249M94 839.5H252M94 991.5H234"/>
</g>
<g fill="none" stroke="#555" stroke-width="1">
<path d="M1137 743.5H1250M1140 903.5H1250M494.5 496V527M924.5 496V527"/>
</g>
<g fill="#111">
<circle cx="206.5" cy="224.5" r="2.3"/><circle cx="206.5" cy="266.5" r="2.3"/><circle cx="494.5" cy="266.5" r="2.3"/>
<circle cx="206.5" cy="413" r="2.3"/><circle cx="263.5" cy="413" r="2.3"/><circle cx="338.5" cy="413" r="2.3"/><circle cx="384.5" cy="413" r="2.3"/><circle cx="494.5" cy="413" r="2.3"/>
<circle cx="71.5" cy="583.5" r="2.3"/><circle cx="107.5" cy="583.5" r="2.3"/>
<circle cx="107.5" cy="653.5" r="2.3"/><circle cx="107.5" cy="711.5" r="2.3"/><circle cx="107.5" cy="839.5" r="2.3"/>
<circle cx="71.5" cy="991.5" r="2.3"/><circle cx="107.5" cy="991.5" r="2.3"/>
</g>
<!-- red grid stubs -->
<g stroke="#e0555f" stroke-width="1.2" fill="none">
<path d="M206.5 176V224"/><path d="M1212.5 176V206"/>
<path d="M858 583.5H865M872 583.5H879M219 583.5H225M233 583.5H239M206.5 519V525M206.5 533V538"/>
<path d="M1178 583.5H1184.5M1192.5 583.5H1198M1212.5 519V525M1212.5 533V538"/>
<path d="M206.5 835V842M206.5 848V854M1212.5 835V842M1212.5 848V854"/>
</g>
<!-- grid bubbles -->
<g fill="#e3eff9" stroke="#86c6e6" stroke-width="1">
<circle cx="206.5" cy="161" r="15"/><circle cx="1212.5" cy="161" r="15"/><circle cx="33.8" cy="583.3" r="15"/>
</g>
<g fill="#3f9bd0" font-family="Liberation Sans, sans-serif" font-size="15" text-anchor="middle">
<text x="206.5" y="166.5">3</text><text x="1212.5" y="166.5">4</text><text x="33.8" y="588.7">C</text>
</g>
<!-- dimension text -->
<g fill="#404040" font-family="Liberation Sans, sans-serif" font-size="21">
<text x="331" y="262" textLength="38" lengthAdjust="spacingAndGlyphs">1,800</text>
<text x="222" y="409" textLength="25" lengthAdjust="spacingAndGlyphs">360</text>
<text x="287" y="409" textLength="26" lengthAdjust="spacingAndGlyphs">465</text>
<text x="347" y="409" textLength="26" lengthAdjust="spacingAndGlyphs">290</text>
<text x="425" y="409" textLength="26" lengthAdjust="spacingAndGlyphs">685</text>
<text transform="translate(104 632) rotate(-90)" textLength="26" lengthAdjust="spacingAndGlyphs">435</text>
<text transform="translate(104 695) rotate(-90)" textLength="26" lengthAdjust="spacingAndGlyphs">365</text>
<text transform="translate(104 788) rotate(-90)" textLength="26" lengthAdjust="spacingAndGlyphs">800</text>
<text transform="translate(104 927) rotate(-90)" textLength="26" lengthAdjust="spacingAndGlyphs">950</text>
<text transform="translate(69 809) rotate(-90)" textLength="40" lengthAdjust="spacingAndGlyphs">2,550</text>
</g>
</svg>
<div class="a" style="left:0px;top:145px;width:16px;height:966px;background:#a0a0a0;"></div>
<div class="a" style="left:16px;top:145px;width:2px;height:966px;background:#b4b4b4;"></div>
<div class="a" style="left:3px;top:249px;width:11px;height:1px;background:#e8e8e8;"></div>
<div class="a" style="left:3px;top:332px;width:11px;height:1px;background:#e8e8e8;"></div>
<div class="a" style="left:3px;top:441px;width:11px;height:1px;background:#e8e8e8;"></div>
<div class="a" style="left:3px;top:550px;width:11px;height:1px;background:#e8e8e8;"></div>
<div class="a" style="left:5px;top:156px;width:7px;height:6px;background:#f4f4f4;border:1px solid #e0e0e8;"></div>
<div class="a" style="left:5px;top:256px;width:7px;height:7px;background:#dfe8f4;"></div>
<div class="a" style="left:4px;top:340px;width:9px;height:8px;background:#f4f4f4;"></div>
<div class="a" style="left:9px;top:342px;width:4px;height:2px;background:#333;"></div>
<div class="a" style="left:4px;top:458px;width:9px;height:9px;background:#e8e8f4;border:1px solid #d0d0e0;"></div>
<div class="a" style="left:18px;top:145.5px;width:144px;height:14.5px;background:#d8424c;"></div>
<div class="a" style="left:133px;top:147px;width:1px;height:12px;background:#f4c0c4;"></div>
<div class="a" style="left:1706px;top:147px;width:15px;height:13.5px;background:#d8424c;"></div>
<svg style="left:1708px;top:149px" width="11" height="10"><path d="M1 5h3M4 2v6M4 3.500h4v3h-4M8 2.500v5" stroke="#fff" stroke-width="1.200" fill="none"/></svg>
<div class="a" style="left:1722px;top:145px;width:17px;height:946px;background:#f0f0f0;"></div>
<div class="a" style="left:1722px;top:399px;width:17px;height:181px;background:#cdcdcd;"></div>
<svg style="left:1726px;top:152px" width="9" height="7"><path d="M.7 5.500l3.800-4 3.800 4" stroke="#444" stroke-width="1.600" fill="none"/></svg>
<svg style="left:1726px;top:1079.5px" width="9" height="7"><path d="M.7 1l3.800 4 3.800-4" stroke="#444" stroke-width="1.600" fill="none"/></svg>
<div class="a" style="left:1739px;top:145px;width:6px;height:985px;background:#f0f0f0;"></div>
<div class="a" style="left:18px;top:1091px;width:1721px;height:20.5px;background:#f0f0f0;"></div>
<div class="a" style="left:19px;top:1092.5px;width:124px;height:16px;background:#fff;border:1px solid #7a7a7a;"></div>
<div class="a" style="left:129px;top:1093.5px;width:13px;height:14px;background:#f0f0f0;border:1px solid #c8c8c8;"></div>
<svg style="left:131.5px;top:1098px" width="9" height="6"><path d="M.7 .8l3.800 4 3.800-4" stroke="#444" stroke-width="1.200" fill="none"/></svg>
<div class="a" style="left:147px;top:1093px;width:2px;height:16px;background:#8a8a8a;"></div>
<div class="a" style="left:152.5px;top:1091px;width:46.5px;height:17.5px;background:#fff;border:1px solid #b0b0b0;border-top:none"></div>
<div class="a" style="left:200.5px;top:1091px;width:54.5px;height:16.5px;background:#f0f0f0;border:1px solid #c4c4c4;border-top:none"></div>
<div class="a" style="left:257.5px;top:1091px;width:72px;height:16.5px;background:#f0f0f0;border:1px solid #c4c4c4;border-top:none"></div>
<div class="a" style="left:331px;top:1091px;width:21px;height:16.5px;background:#f0f0f0;border:1px solid #c4c4c4;border-top:none"></div>
<svg style="left:335px;top:1094px" width="14" height="12"><path d="M.7 2.500h11v6l-3 3h-8z" fill="#fff" stroke="#222" stroke-width="1.300"/><path d="M11 0l.8 1.500 1.500.4-1.500.6-.8 1.500-.6-1.500-1.500-.6 1.500-.4z" fill="#f0d040"/></svg>
<svg style="left:1139px;top:1092px" width="6" height="17"><path d="M4.500 .5v15.500h-4" stroke="#555" stroke-width="1.200" fill="none"/></svg>
<svg style="left:1149px;top:1097px" width="7" height="9"><path d="M5.500 .8l-4 3.700 4 3.700" stroke="#333" stroke-width="1.700" fill="none"/></svg>
<svg style="left:1709px;top:1097px" width="7" height="9"><path d="M1.500 .8l4 3.700-4 3.700" stroke="#333" stroke-width="1.700" fill="none"/></svg>
<div class="a" style="left:1432.5px;top:1093px;width:136.5px;height:16.5px;background:#cdcdcd;"></div>
<div class="a" style="left:0px;top:1111.5px;width:1741px;height:16px;background:#a0a0a0;"></div>
<div class="a" style="left:38px;top:1118px;width:10px;height:4px;background:#fff;border:1px solid #c8c8d8;"></div>
<div class="a" style="left:124px;top:1113px;width:1px;height:13px;background:#e0e0e0;"></div>
<svg style="left:127px;top:1112.5px" width="15" height="14"><path d="M0 1h8M0 12.500h8" stroke="#e04848" stroke-width="1.500"/><path d="M1 7h12M4 4.500v5M10 4.500v5" stroke="#4a78c8" stroke-width="1.300"/><path d="M9 2h5M9 11h5" stroke="#ddd" stroke-width="1"/></svg>
<div class="a" style="left:219.5px;top:1113px;width:1px;height:13px;background:#e0e0e0;"></div>
<div class="a" style="left:1745px;top:145px;width:16px;height:985px;background:#a0a0a0;"></div>
<div class="a" style="left:1761px;top:145px;width:2px;height:985px;background:#6e6e6e;"></div>
<div class="a" style="left:1745px;top:145px;width:16px;height:18px;background:#8a8a8a;"></div>
<div class="a" style="left:1745px;top:163.5px;width:16px;height:76.5px;background:#fff;"></div>
<svg style="left:1747px;top:165px" width="12" height="10"><path d="M1 1h10l-2 4h-6zM4 5v4h4v-4" fill="#9cc8e0" stroke="#5a8ab0" stroke-width=".7"/></svg>
<svg style="left:1748px;top:229px" width="10" height="10"><path d="M1 1l8 8M9 1l-8 8" stroke="#e02020" stroke-width="1.800"/></svg>
<div class="a" style="left:1748px;top:244px;width:10px;height:12px;background:#c8d0d8;border:1px solid #7a8a9a;"></div>
<div class="a" style="left:1747px;top:330px;width:12px;height:1px;background:#e0e0e0;"></div>
<svg style="left:1747px;top:339px" width="12" height="13"><rect x=".5" y=".5" width="10" height="11" fill="#fff" stroke="#4a5a7a"/><circle cx="5" cy="5" r="2.800" fill="none" stroke="#4a5a7a" stroke-width="1.200"/><path d="M3 8l-2 3" stroke="#c88a28" stroke-width="1.500"/></svg>
<div class="a" style="left:1747px;top:398px;width:12px;height:1px;background:#e0e0e0;"></div>
<svg style="left:1747px;top:409px" width="12" height="13"><rect x=".5" y=".5" width="10" height="11" fill="#fff" stroke="#4a5a7a"/><path d="M4 3l6 7" stroke="#2858c8" stroke-width="2.500"/></svg>
<div class="a" style="left:1747px;top:516px;width:12px;height:1px;background:#e0e0e0;"></div>
<svg style="left:1749px;top:1113px" width="9" height="13"><path d="M2.500 1h4v6h2h-8h2zM4.500 7v5.500" stroke="#fff" stroke-width="1.200" fill="none"/></svg>
<div class="a" style="left:0px;top:1128px;width:2048px;height:27px;background:#f0f0f0;"></div>
<div class="a" style="left:1242px;top:1131px;width:106.5px;height:20.5px;background:#f0f0f0;border:1px solid #fff;border-top-color:#a0a0a0;border-left-color:#a0a0a0"></div>
<div class="a" style="left:1407px;top:1131px;width:54.5px;height:21.5px;background:#e5f1fb;border:1px solid #0078d7;"></div>
<svg style="left:1467px;top:1133px" width="17" height="17"><path d="M3 3h11v11h-11z" fill="#fff" stroke="#4a78b0" stroke-width="1"/><g fill="#4a78b0"><rect x="0" y="0" width="5" height="5"/><rect x="12" y="0" width="5" height="5"/><rect x="0" y="12" width="5" height="5"/><rect x="12" y="12" width="5" height="5"/></g></svg>
<svg style="left:1568px;top:1133px" width="17" height="18"><circle cx="6.500" cy="6.500" r="5.500" fill="#eef4fc" stroke="#8a9ab0" stroke-width="1.300"/><path d="M3.500 6.500h6" stroke="#4a5a7a" stroke-width="1.300"/><path d="M10.500 10.500l5 5.500" stroke="#d8a038" stroke-width="2.600"/></svg>
<div class="a" style="left:1604.5px;top:1131px;width:23.5px;height:21.5px;background:#e5f1fb;border:1px solid #0078d7;"></div>
<div class="a" style="left:1630.5px;top:1131px;width:23.5px;height:21.5px;background:#e5f1fb;border:1px solid #0078d7;"></div>
<svg style="left:1607px;top:1134px" width="19" height="16"><rect x="1" y="4" width="3.500" height="4" fill="none" stroke="#4a78c8" stroke-width="1.200"/><text x="10" y="12.500" font-size="14" fill="#e02828" text-anchor="middle" font-family="Liberation Sans, sans-serif">?</text><path d="M14 10l3.500 4.500" stroke="#4a78c8" stroke-width="2.200"/></svg>
<svg style="left:1633px;top:1134px" width="19" height="16"><rect x="0" y="4" width="4" height="5" fill="#4a78c8"/><rect x="15" y="4" width="4" height="5" fill="#4a78c8"/><path d="M5.500 2.500l8 9M13.500 2.500l-8 9" stroke="#e02828" stroke-width="1.800"/></svg>
<svg style="left:1658.5px;top:1133px" width="18" height="18"><rect x="5.500" y="5.500" width="11" height="11" fill="none" stroke="#3aa83a"/><rect x="3.500" y="8.500" width="11" height="8" fill="none" stroke="#d84a9a"/><path d="M1 5c3-4 9-4 12 0-3 3-9 3-12 0z" fill="#6a7a9a" stroke="#333" stroke-width=".6"/><circle cx="7" cy="5" r="2" fill="#284a98"/></svg>
<svg style="left:1683px;top:1133px" width="19" height="19"><path d="M.7 .7h9l3 3v13h-12z" fill="#fff" stroke="#333" stroke-width="1"/><rect x="5.500" y="8.500" width="12" height="9" fill="#5a9ad8" stroke="#284a78"/><path d="M7 13c2-3 7-3 9 0-2 2-7 2-9 0z" fill="#6a7a9a" stroke="#222" stroke-width=".5"/><circle cx="11.500" cy="13" r="1.600" fill="#1a2a68"/></svg>
<div class="a" style="left:1796.5px;top:1131px;width:84px;height:21px;background:#f0f0f0;border:1px solid #fff;border-top-color:#a0a0a0;border-left-color:#a0a0a0"></div>
<div class="a" style="left:1882px;top:1131px;width:82px;height:21px;background:#f0f0f0;border:1px solid #fff;border-top-color:#a0a0a0;border-left-color:#a0a0a0"></div>
<div class="a" style="left:1965.5px;top:1131px;width:84px;height:21px;background:#f0f0f0;border:1px solid #fff;border-top-color:#a0a0a0;border-left-color:#a0a0a0"></div>
<div class="a" style="left:1763px;top:145px;width:285px;height:985px;background:#f0f0f0;"></div>
<div class="a" style="left:1763.5px;top:146.5px;width:135.5px;height:19.5px;background:#fff;border:1px solid #7a7a7a;"></div>
<div class="a" style="left:1884px;top:147.5px;width:14px;height:17.5px;background:#f0f0f0;border:1px solid #c0c0c0;"></div>
<svg style="left:1887px;top:153px" width="9" height="6"><path d="M.7 .8l3.800 4 3.800-4" stroke="#444" stroke-width="1.200" fill="none"/></svg>
<svg style="left:1768px;top:150px" width="15" height="13"><path d="M.7 1.500h12v6l-3.500 3.500h-8.500z" fill="#fff" stroke="#222" stroke-width="1.300"/><path d="M9 11v-3.500h3.500" fill="none" stroke="#222" stroke-width="1"/></svg>
<div class="a" style="left:1946px;top:146.5px;width:103px;height:19.5px;background:#e1e1e1;border:1px solid #adadad;"></div>
<svg style="left:1950px;top:150px" width="14" height="13" viewBox="0 0 16 14"><g stroke="#2f93a8" stroke-width=".5"><path d="M1 10l7-3 7 2-7 4z" fill="#58b7c9"/><path d="M1 7l7-3 7 2-7 4z" fill="#7fcfdc"/><path d="M1 4l7-3 7 2-7 4z" fill="#a6e0e8"/></g></svg>
<div class="a" style="left:1763.5px;top:169px;width:92.5px;height:20.5px;background:#fff;border:1px solid #7a7a7a;"></div>
<div class="a" style="left:1841.5px;top:170px;width:13.5px;height:18.5px;background:#f0f0f0;border:1px solid #c0c0c0;"></div>
<svg style="left:1844px;top:176.5px" width="9" height="6"><path d="M.7 .8l3.800 4 3.800-4" stroke="#444" stroke-width="1.200" fill="none"/></svg>
<div class="a" style="left:1859px;top:169px;width:190px;height:20.5px;background:#fff;border:1px solid #7a7a7a;"></div>
<div class="a" style="left:2034px;top:170px;width:14px;height:18.5px;background:#f0f0f0;border:1px solid #c0c0c0;"></div>
<svg style="left:2037px;top:176.5px" width="9" height="6"><path d="M.7 .8l3.800 4 3.800-4" stroke="#444" stroke-width="1.200" fill="none"/></svg>
<svg style="left:1773px;top:197px" width="18" height="13"><path d="M1 7c4-6 12-6 16 0-4 4.500-12 4.500-16 0z" fill="#555" opacity=".55"/><path d="M1 6.500c4-6 12-6 16 0" fill="none" stroke="#555" stroke-width="1.300"/><circle cx="9" cy="7" r="3" fill="#2a4aa8"/><path d="M2 3.500c4-3.500 10-3.500 14 0" stroke="#555" stroke-width=".8" fill="none"/></svg>
<svg style="left:1813px;top:194px" width="18" height="18"><path d="M3 3.500l6-2 1.500 4-6 2.500zM7 7l-4 5h5M9 5l3.500 6" fill="none" stroke="#555" stroke-width="1.500"/><circle cx="12.500" cy="13" r="3.200" fill="#4ab04a"/><path d="M11 13l1.200 1.300 2-2.600" stroke="#fff" stroke-width="1" fill="none"/></svg>
<div class="a" style="left:1844.5px;top:193px;width:20.5px;height:20.5px;background:#e1e1e1;border:1px solid #adadad;"></div>
<div class="a" style="left:1868px;top:193px;width:20.5px;height:20.5px;background:#e1e1e1;border:1px solid #adadad;"></div>
<svg style="left:1849.5px;top:198px" width="11" height="11"><path d="M.5 .5h10v10h-10zM5.500 .5v10M.5 5.500h10" fill="none" stroke="#222" stroke-width="1.100"/></svg>
<svg style="left:1873px;top:198px" width="11" height="11"><path d="M.5 .5h10v10h-10zM.5 5.500h10" fill="none" stroke="#222" stroke-width="1.100"/></svg>
<div class="a" style="left:1763px;top:217px;width:286px;height:885px;background:#fff;border:1px solid #4a4a4a;border-right:none"></div>
<div class="a" style="left:1764px;top:238px;width:284px;height:1px;background:#a0a0a0;"></div>
<div class="a" style="left:1764px;top:239px;width:284px;height:1px;background:#d8d8d8;"></div>
<div class="a" style="left:1802.5px;top:219px;width:1px;height:19px;background:#e0e0e0;"></div>
<div class="a" style="left:1842.5px;top:219px;width:1px;height:19px;background:#e0e0e0;"></div>
<div class="a" style="left:1989.5px;top:219px;width:1px;height:19px;background:#e0e0e0;"></div>
<div class="a" style="left:1843px;top:240px;width:205px;height:224px;background:#ebf3e8;"></div>
<svg style="left:1774px;top:244px" width="18" height="13"><path d="M1 7c4-6 12-6 16 0-4 4.500-12 4.500-16 0z" fill="#555" opacity=".55"/><path d="M1 6.500c4-6 12-6 16 0" fill="none" stroke="#555" stroke-width="1.300"/><circle cx="9" cy="7" r="3" fill="#2a4aa8"/><path d="M2 3.500c4-3.500 10-3.500 14 0" stroke="#555" stroke-width=".8" fill="none"/></svg>
<svg style="left:1815px;top:242px" width="18" height="18"><path d="M3 3.500l6-2 1.500 4-6 2.500zM7 7l-4 5h5M9 5l3.500 6" fill="none" stroke="#555" stroke-width="1.500"/><circle cx="12.500" cy="13" r="3.200" fill="#4ab04a"/><path d="M11 13l1.200 1.300 2-2.600" stroke="#fff" stroke-width="1" fill="none"/></svg>
<svg style="left:1849px;top:245.5px" width="10" height="10"><path d="M.5 .5h9v9h-9zM5 2.500v5M2.500 5h5" fill="#fff" stroke="#333" stroke-width="1"/></svg>
<svg style="left:1868px;top:244.5px" width="14" height="12" viewBox="0 0 16 14"><g stroke="#2f93a8" stroke-width=".5"><path d="M1 10l7-3 7 2-7 4z" fill="#58b7c9"/><path d="M1 7l7-3 7 2-7 4z" fill="#7fcfdc"/><path d="M1 4l7-3 7 2-7 4z" fill="#a6e0e8"/></g></svg>
<svg style="left:1774px;top:266.38px" width="18" height="13"><path d="M1 7c4-6 12-6 16 0-4 4.500-12 4.500-16 0z" fill="#9a9a9a" opacity=".55"/><path d="M1 6.500c4-6 12-6 16 0" fill="none" stroke="#9a9a9a" stroke-width="1.300"/><circle cx="9" cy="7" r="3" fill="#8a8a8a"/><path d="M2 3.500c4-3.500 10-3.500 14 0" stroke="#9a9a9a" stroke-width=".8" fill="none"/></svg>
<svg style="left:1815px;top:264.38px" width="18" height="18"><path d="M3 3.500l6-2 1.500 4-6 2.500zM7 7l-4 5h5M9 5l3.500 6" fill="none" stroke="#9a9a9a" stroke-width="1.500"/><circle cx="12.500" cy="13" r="2.800" fill="none" stroke="#9a9a9a" stroke-width="1.400"/></svg>
<svg style="left:1847px;top:266.88px" width="14" height="12" viewBox="0 0 16 14"><g stroke="#2f93a8" stroke-width=".5"><path d="M1 10l7-3 7 2-7 4z" fill="#58b7c9"/><path d="M1 7l7-3 7 2-7 4z" fill="#7fcfdc"/><path d="M1 4l7-3 7 2-7 4z" fill="#a6e0e8"/></g></svg>
<svg style="left:1774px;top:288.76px" width="18" height="13"><path d="M1 7c4-6 12-6 16 0-4 4.500-12 4.500-16 0z" fill="#9a9a9a" opacity=".55"/><path d="M1 6.500c4-6 12-6 16 0" fill="none" stroke="#9a9a9a" stroke-width="1.300"/><circle cx="9" cy="7" r="3" fill="#8a8a8a"/><path d="M2 3.500c4-3.500 10-3.500 14 0" stroke="#9a9a9a" stroke-width=".8" fill="none"/></svg>
<svg style="left:1815px;top:286.76px" width="18" height="18"><path d="M3 3.500l6-2 1.500 4-6 2.500zM7 7l-4 5h5M9 5l3.500 6" fill="none" stroke="#9a9a9a" stroke-width="1.500"/><circle cx="12.500" cy="13" r="2.800" fill="none" stroke="#9a9a9a" stroke-width="1.400"/></svg>
<svg style="left:1847px;top:289.26px" width="14" height="12" viewBox="0 0 16 14"><g stroke="#2f93a8" stroke-width=".5"><path d="M1 10l7-3 7 2-7 4z" fill="#58b7c9"/><path d="M1 7l7-3 7 2-7 4z" fill="#7fcfdc"/><path d="M1 4l7-3 7 2-7 4z" fill="#a6e0e8"/></g></svg>
<svg style="left:1774px;top:311.14px" width="18" height="13"><path d="M1 7c4-6 12-6 16 0-4 4.500-12 4.500-16 0z" fill="#9a9a9a" opacity=".55"/><path d="M1 6.500c4-6 12-6 16 0" fill="none" stroke="#9a9a9a" stroke-width="1.300"/><circle cx="9" cy="7" r="3" fill="#8a8a8a"/><path d="M2 3.500c4-3.500 10-3.500 14 0" stroke="#9a9a9a" stroke-width=".8" fill="none"/></svg>
<svg style="left:1815px;top:309.14px" width="18" height="18"><path d="M3 3.500l6-2 1.500 4-6 2.500zM7 7l-4 5h5M9 5l3.500 6" fill="none" stroke="#9a9a9a" stroke-width="1.500"/><circle cx="12.500" cy="13" r="2.800" fill="none" stroke="#9a9a9a" stroke-width="1.400"/></svg>
<svg style="left:1847px;top:311.64px" width="14" height="12" viewBox="0 0 16 14"><g stroke="#2f93a8" stroke-width=".5"><path d="M1 10l7-3 7 2-7 4z" fill="#58b7c9"/><path d="M1 7l7-3 7 2-7 4z" fill="#7fcfdc"/><path d="M1 4l7-3 7 2-7 4z" fill="#a6e0e8"/></g></svg>
<svg style="left:1774px;top:333.52px" width="18" height="13"><path d="M1 7c4-6 12-6 16 0-4 4.500-12 4.500-16 0z" fill="#9a9a9a" opacity=".55"/><path d="M1 6.500c4-6 12-6 16 0" fill="none" stroke="#9a9a9a" stroke-width="1.300"/><circle cx="9" cy="7" r="3" fill="#8a8a8a"/><path d="M2 3.500c4-3.500 10-3.500 14 0" stroke="#9a9a9a" stroke-width=".8" fill="none"/></svg>
<svg style="left:1815px;top:331.52px" width="18" height="18"><path d="M3 3.500l6-2 1.500 4-6 2.500zM7 7l-4 5h5M9 5l3.500 6" fill="none" stroke="#9a9a9a" stroke-width="1.500"/><circle cx="12.500" cy="13" r="2.800" fill="none" stroke="#9a9a9a" stroke-width="1.400"/></svg>
<svg style="left:1847px;top:334.02px" width="14" height="12" viewBox="0 0 16 14"><g stroke="#2f93a8" stroke-width=".5"><path d="M1 10l7-3 7 2-7 4z" fill="#58b7c9"/><path d="M1 7l7-3 7 2-7 4z" fill="#7fcfdc"/><path d="M1 4l7-3 7 2-7 4z" fill="#a6e0e8"/></g></svg>
<svg style="left:1774px;top:355.9px" width="18" height="13"><path d="M1 7c4-6 12-6 16 0-4 4.500-12 4.500-16 0z" fill="#9a9a9a" opacity=".55"/><path d="M1 6.500c4-6 12-6 16 0" fill="none" stroke="#9a9a9a" stroke-width="1.300"/><circle cx="9" cy="7" r="3" fill="#8a8a8a"/><path d="M2 3.500c4-3.500 10-3.500 14 0" stroke="#9a9a9a" stroke-width=".8" fill="none"/></svg>
<svg style="left:1815px;top:353.9px" width="18" height="18"><path d="M3 3.500l6-2 1.500 4-6 2.500zM7 7l-4 5h5M9 5l3.500 6" fill="none" stroke="#9a9a9a" stroke-width="1.500"/><circle cx="12.500" cy="13" r="2.800" fill="none" stroke="#9a9a9a" stroke-width="1.400"/></svg>
<svg style="left:1847px;top:356.4px" width="14" height="12" viewBox="0 0 16 14"><g stroke="#2f93a8" stroke-width=".5"><path d="M1 10l7-3 7 2-7 4z" fill="#58b7c9"/><path d="M1 7l7-3 7 2-7 4z" fill="#7fcfdc"/><path d="M1 4l7-3 7 2-7 4z" fill="#a6e0e8"/></g></svg>
<svg style="left:1774px;top:378.28px" width="18" height="13"><path d="M1 7c4-6 12-6 16 0-4 4.500-12 4.500-16 0z" fill="#9a9a9a" opacity=".55"/><path d="M1 6.500c4-6 12-6 16 0" fill="none" stroke="#9a9a9a" stroke-width="1.300"/><circle cx="9" cy="7" r="3" fill="#8a8a8a"/><path d="M2 3.500c4-3.500 10-3.500 14 0" stroke="#9a9a9a" stroke-width=".8" fill="none"/></svg>
<svg style="left:1815px;top:376.28px" width="18" height="18"><path d="M3 3.500l6-2 1.500 4-6 2.500zM7 7l-4 5h5M9 5l3.500 6" fill="none" stroke="#9a9a9a" stroke-width="1.500"/><circle cx="12.500" cy="13" r="2.800" fill="none" stroke="#9a9a9a" stroke-width="1.400"/></svg>
<svg style="left:1847px;top:378.78px" width="14" height="12" viewBox="0 0 16 14"><g stroke="#2f93a8" stroke-width=".5"><path d="M1 10l7-3 7 2-7 4z" fill="#58b7c9"/><path d="M1 7l7-3 7 2-7 4z" fill="#7fcfdc"/><path d="M1 4l7-3 7 2-7 4z" fill="#a6e0e8"/></g></svg>
<svg style="left:1774px;top:400.66px" width="18" height="13"><path d="M1 7c4-6 12-6 16 0-4 4.500-12 4.500-16 0z" fill="#9a9a9a" opacity=".55"/><path d="M1 6.500c4-6 12-6 16 0" fill="none" stroke="#9a9a9a" stroke-width="1.300"/><circle cx="9" cy="7" r="3" fill="#8a8a8a"/><path d="M2 3.500c4-3.500 10-3.500 14 0" stroke="#9a9a9a" stroke-width=".8" fill="none"/></svg>
<svg style="left:1815px;top:398.66px" width="18" height="18"><path d="M3 3.500l6-2 1.500 4-6 2.500zM7 7l-4 5h5M9 5l3.500 6" fill="none" stroke="#9a9a9a" stroke-width="1.500"/><circle cx="12.500" cy="13" r="2.800" fill="none" stroke="#9a9a9a" stroke-width="1.400"/></svg>
<svg style="left:1847px;top:401.16px" width="14" height="12" viewBox="0 0 16 14"><g stroke="#2f93a8" stroke-width=".5"><path d="M1 10l7-3 7 2-7 4z" fill="#58b7c9"/><path d="M1 7l7-3 7 2-7 4z" fill="#7fcfdc"/><path d="M1 4l7-3 7 2-7 4z" fill="#a6e0e8"/></g></svg>
<svg style="left:1774px;top:423.04px" width="18" height="13"><path d="M1 7c4-6 12-6 16 0-4 4.500-12 4.500-16 0z" fill="#9a9a9a" opacity=".55"/><path d="M1 6.500c4-6 12-6 16 0" fill="none" stroke="#9a9a9a" stroke-width="1.300"/><circle cx="9" cy="7" r="3" fill="#8a8a8a"/><path d="M2 3.500c4-3.500 10-3.500 14 0" stroke="#9a9a9a" stroke-width=".8" fill="none"/></svg>
<svg style="left:1815px;top:421.04px" width="18" height="18"><path d="M3 3.500l6-2 1.500 4-6 2.500zM7 7l-4 5h5M9 5l3.500 6" fill="none" stroke="#9a9a9a" stroke-width="1.500"/><circle cx="12.500" cy="13" r="2.800" fill="none" stroke="#9a9a9a" stroke-width="1.400"/></svg>
<svg style="left:1847px;top:423.54px" width="14" height="12" viewBox="0 0 16 14"><g stroke="#2f93a8" stroke-width=".5"><path d="M1 10l7-3 7 2-7 4z" fill="#58b7c9"/><path d="M1 7l7-3 7 2-7 4z" fill="#7fcfdc"/><path d="M1 4l7-3 7 2-7 4z" fill="#a6e0e8"/></g></svg>
<svg style="left:1774px;top:445.42px" width="18" height="13"><path d="M1 7c4-6 12-6 16 0-4 4.500-12 4.500-16 0z" fill="#9a9a9a" opacity=".55"/><path d="M1 6.500c4-6 12-6 16 0" fill="none" stroke="#9a9a9a" stroke-width="1.300"/><circle cx="9" cy="7" r="3" fill="#8a8a8a"/><path d="M2 3.500c4-3.500 10-3.500 14 0" stroke="#9a9a9a" stroke-width=".8" fill="none"/></svg>
<svg style="left:1815px;top:443.42px" width="18" height="18"><path d="M3 3.500l6-2 1.500 4-6 2.500zM7 7l-4 5h5M9 5l3.500 6" fill="none" stroke="#9a9a9a" stroke-width="1.500"/><circle cx="12.500" cy="13" r="2.800" fill="none" stroke="#9a9a9a" stroke-width="1.400"/></svg>
<svg style="left:1847px;top:445.92px" width="14" height="12" viewBox="0 0 16 14"><g stroke="#2f93a8" stroke-width=".5"><path d="M1 10l7-3 7 2-7 4z" fill="#58b7c9"/><path d="M1 7l7-3 7 2-7 4z" fill="#7fcfdc"/><path d="M1 4l7-3 7 2-7 4z" fill="#a6e0e8"/></g></svg>
<div class="a" style="left:1766.5px;top:1108.5px;width:13px;height:13px;background:#fff;border:1px solid #333;"></div>
<svg style="left:1768px;top:1110px" width="11" height="10"><path d="M1 5l3 3.500 6-7.500" stroke="#222" stroke-width="1.300" fill="none"/></svg>
<svg class="tl" width="2048" height="1155" style="left:0;top:0" font-family="Liberation Sans, sans-serif" font-size="13" fill="#111">
<text transform="translate(8 184.42) scale(1 1)" text-anchor="middle" font-size="12" fill="#fff">プ</text>
<text transform="translate(8 197.62) scale(1 1)" text-anchor="middle" font-size="12" fill="#fff">ロ</text>
<text transform="translate(8 210.82) scale(1 1)" text-anchor="middle" font-size="12" fill="#fff">パ</text>
<text transform="translate(8 224.02) scale(1 1)" text-anchor="middle" font-size="12" fill="#fff">テ</text>
<text transform="translate(8 237.22) scale(1 1)" text-anchor="middle" font-size="12" fill="#fff">ィ</text>
<text transform="translate(8 285.382) scale(1 1)" text-anchor="middle" font-size="12" fill="#fff">干</text>
<text transform="translate(8 297.507) scale(1 1)" text-anchor="middle" font-size="12" fill="#fff">渉</text>
<text transform="translate(8 309.632) scale(1 1)" text-anchor="middle" font-size="12" fill="#fff">検</text>
<text transform="translate(8 321.757) scale(1 1)" text-anchor="middle" font-size="12" fill="#fff">査</text>
<text transform="translate(8 366.372) scale(1 0.722789)" text-anchor="middle" font-size="12" fill="#fff">シ</text>
<text transform="translate(8 374.872) scale(1 0.722789)" text-anchor="middle" font-size="12" fill="#fff">ミ</text>
<text transform="translate(8 383.372) scale(1 0.722789)" text-anchor="middle" font-size="12" fill="#fff">ュ</text>
<text transform="translate(8 391.872) scale(1 0.722789)" text-anchor="middle" font-size="12" fill="#fff">レ</text>
<path d="M8.5 394.02v6.46" stroke="#fff" stroke-width="1.1" fill="none"/>
<text transform="translate(8 408.872) scale(1 0.722789)" text-anchor="middle" font-size="12" fill="#fff">シ</text>
<text transform="translate(8 417.372) scale(1 0.722789)" text-anchor="middle" font-size="12" fill="#fff">ョ</text>
<text transform="translate(8 425.872) scale(1 0.722789)" text-anchor="middle" font-size="12" fill="#fff">ン</text>
<text transform="translate(8 486.781) scale(1 0.909864)" text-anchor="middle" font-size="12" fill="#fff">ラ</text>
<text transform="translate(8 497.481) scale(1 0.909864)" text-anchor="middle" font-size="12" fill="#fff">イ</text>
<text transform="translate(8 508.181) scale(1 0.909864)" text-anchor="middle" font-size="12" fill="#fff">ブ</text>
<text transform="translate(8 518.881) scale(1 0.909864)" text-anchor="middle" font-size="12" fill="#fff">ラ</text>
<text transform="translate(8 529.581) scale(1 0.909864)" text-anchor="middle" font-size="12" fill="#fff">リ</text>
<text x="20.6" y="157" textLength="106" lengthAdjust="spacingAndGlyphs" fill="#fff" font-size="12">平面図 1/50 [平面]</text>
<path d="M141.5 150.25h10l-5 5.5z" fill="#fff"/>
<text x="22" y="1104.5" textLength="97" lengthAdjust="spacingAndGlyphs" font-size="12">レイアウトグループ1</text>
<text x="157" y="1104.16" textLength="37.5" lengthAdjust="spacingAndGlyphs" font-size="12.48">平面図</text>
<text x="205" y="1104.16" textLength="45" lengthAdjust="spacingAndGlyphs" fill="#9a9a9a" font-size="12.48">4方向図</text>
<text x="262" y="1104.16" textLength="63" lengthAdjust="spacingAndGlyphs" fill="#9a9a9a" font-size="12.48">平面全体図</text>
<text x="57" y="1123.5" textLength="47" lengthAdjust="spacingAndGlyphs" fill="#e4e4e4" font-size="12">メッセージ</text>
<text x="149" y="1123.5" textLength="49" lengthAdjust="spacingAndGlyphs" fill="#f0f0f0" font-size="12">進捗管理</text>
<text transform="translate(1752 189.673) scale(1 0.887311)" text-anchor="middle" font-size="11.5" fill="#111">レ</text>
<text transform="translate(1752 199.673) scale(1 0.887311)" text-anchor="middle" font-size="11.5" fill="#111">イ</text>
<text transform="translate(1752 209.673) scale(1 0.887311)" text-anchor="middle" font-size="11.5" fill="#111">ヤ</text>
<path d="M1752.5 212.2v7.6" stroke="#111" stroke-width="1.1" fill="none"/>
<text transform="translate(1752 278.39) scale(1 1)" text-anchor="middle" font-size="11.5" fill="#ececec">系</text>
<text transform="translate(1752 290.89) scale(1 1)" text-anchor="middle" font-size="11.5" fill="#ececec">統</text>
<text transform="translate(1752 303.39) scale(1 1)" text-anchor="middle" font-size="11.5" fill="#ececec">管</text>
<text transform="translate(1752 315.89) scale(1 1)" text-anchor="middle" font-size="11.5" fill="#ececec">理</text>
<text transform="translate(1752 371.64) scale(1 1)" text-anchor="middle" font-size="11.5" fill="#ececec">検</text>
<text transform="translate(1752 384.64) scale(1 1)" text-anchor="middle" font-size="11.5" fill="#ececec">索</text>
<text transform="translate(1752 441.252) scale(1 0.946466)" text-anchor="middle" font-size="11.5" fill="#ececec">図</text>
<text transform="translate(1752 451.918) scale(1 0.946466)" text-anchor="middle" font-size="11.5" fill="#ececec">面</text>
<text transform="translate(1752 462.585) scale(1 0.946466)" text-anchor="middle" font-size="11.5" fill="#ececec">マ</text>
<path d="M1752.5 465.28v8.10667" stroke="#ececec" stroke-width="1.1" fill="none"/>
<text transform="translate(1752 483.918) scale(1 0.946466)" text-anchor="middle" font-size="11.5" fill="#ececec">カ</text>
<path d="M1752.5 486.613v8.10667" stroke="#ececec" stroke-width="1.1" fill="none"/>
<text x="4.5" y="1145.8" textLength="633" lengthAdjust="spacingAndGlyphs" fill="#222" font-size="12">Ctrl＋左クリックで要素を追加選択、Shift＋左クリックで選択要素の解除。（要素選択後のShiftキーでハンドルの表示切り替え）</text>
<text x="1244.5" y="1146" textLength="66" lengthAdjust="spacingAndGlyphs" fill="#6e6e6e" font-size="12">距離キーイン</text>
<text x="1355.5" y="1146.16" textLength="42" lengthAdjust="spacingAndGlyphs" font-size="12.48">ペーパー</text>
<text x="1417" y="1146.16" textLength="32.5" lengthAdjust="spacingAndGlyphs" font-size="12.48">モデル</text>
<text x="1505.7" y="1146" textLength="24.3" lengthAdjust="spacingAndGlyphs" font-size="12">198%</text>
<path d="M1548.5 1138.97h11l-5.5 6.05z" fill="#111"/>
<path d="M1589.5 1139.25h10l-5 5.5z" fill="#7a7a7a"/>
<text x="1704.5" y="1146.16" textLength="55.3" lengthAdjust="spacingAndGlyphs" font-size="12.48">確認モード</text>
<path d="M1780 1139.25h10l-5 5.5z" fill="#6a6a6a"/>
<text x="1825.75" y="1146" textLength="25.5" lengthAdjust="spacingAndGlyphs" fill="#222" font-size="12">8400</text>
<text x="1910.5" y="1146" textLength="25" lengthAdjust="spacingAndGlyphs" fill="#222" font-size="12">6176</text>
<text x="1991.5" y="1146" textLength="32" lengthAdjust="spacingAndGlyphs" fill="#222" font-size="12">1FL+0</text>
<text x="1787" y="160.66" textLength="83.5" lengthAdjust="spacingAndGlyphs" font-size="12.48">現在のレイアウト</text>
<text x="1969" y="160.66" textLength="65" lengthAdjust="spacingAndGlyphs" font-size="12.48">レイヤー一覧</text>
<text x="1766" y="183.66" textLength="40" lengthAdjust="spacingAndGlyphs" font-size="12.48">グループ</text>
<text x="1862" y="183.66" textLength="29.5" lengthAdjust="spacingAndGlyphs" font-size="12.48">すべて</text>
<text x="1772" y="232.66" textLength="25.5" lengthAdjust="spacingAndGlyphs" font-size="12.48">表示</text>
<text x="1809" y="232.66" textLength="26" lengthAdjust="spacingAndGlyphs" font-size="12.48">検索</text>
<text x="1850" y="232.66" textLength="52" lengthAdjust="spacingAndGlyphs" font-size="12.48">レイヤー名</text>
<text x="1996" y="232.66" textLength="38.5" lengthAdjust="spacingAndGlyphs" font-size="12.48">要素数</text>
<text x="1887" y="255.16" textLength="26" lengthAdjust="spacingAndGlyphs" font-size="12.48">汎用</text>
<text x="1866" y="277.54" textLength="26" lengthAdjust="spacingAndGlyphs" font-size="12.48">建築</text>
<text x="1866" y="299.92" textLength="26" lengthAdjust="spacingAndGlyphs" font-size="12.48">空調</text>
<text x="1866" y="322.3" textLength="25.5" lengthAdjust="spacingAndGlyphs" font-size="12.48">衛生</text>
<text x="1866" y="344.68" textLength="26" lengthAdjust="spacingAndGlyphs" font-size="12.48">電気</text>
<text x="1866" y="367.06" textLength="51.5" lengthAdjust="spacingAndGlyphs" font-size="12.48">機器器具</text>
<text x="1866" y="389.44" textLength="83" lengthAdjust="spacingAndGlyphs" font-size="12.48">鋼材・支持金物</text>
<text x="1866" y="411.82" textLength="93" lengthAdjust="spacingAndGlyphs" font-size="12.48">スリーブ・インサート</text>
<text x="1866" y="434.2" textLength="51.5" lengthAdjust="spacingAndGlyphs" font-size="12.48">干渉検査</text>
<text x="1866" y="456.58" textLength="66.5" lengthAdjust="spacingAndGlyphs" font-size="12.48">図面マーカー</text>
<text x="1785.5" y="1119.16" textLength="165" lengthAdjust="spacingAndGlyphs" font-size="12.48">要素のないレイヤーは表示しない</text>
</svg>
<div class="a" style="left:604px;top:205px;width:1078.5px;height:219.5px;background:#f0f0f0;border:1px solid #3d8cd0;"></div>
<div class="a" style="left:604px;top:205px;width:1078.5px;height:33px;background:#1e73be;"></div>
<svg style="left:1659px;top:216px" width="12" height="12"><path d="M.7 .7l10.500 10.500M11.200 .7l-10.500 10.500" stroke="#fff" stroke-width="1.200"/></svg>
<div class="a" style="left:616px;top:250px;width:1054.5px;height:78px;background:#fff;border:1px solid #828282;"></div>
<div class="a" style="left:617px;top:251px;width:1052.5px;height:1px;background:#a0a0a0;"></div>
<div class="a" style="left:617px;top:271px;width:1052.5px;height:1px;background:#a0a0a0;"></div>
<div class="a" style="left:617px;top:272px;width:1052.5px;height:20.5px;background:#ebf3e8;"></div>
<div class="a" style="left:660px;top:292.5px;width:1009.5px;height:21px;background:#1e73be;"></div>
<div class="a" style="left:617px;top:292px;width:1052.5px;height:1px;background:#dcdcdc;"></div>
<div class="a" style="left:617px;top:313.5px;width:1052.5px;height:1px;background:#dcdcdc;"></div>
<div class="a" style="left:659.5px;top:252px;width:1px;height:19px;background:#dcdcdc;"></div>
<div class="a" style="left:866.5px;top:252px;width:1px;height:19px;background:#dcdcdc;"></div>
<div class="a" style="left:1080px;top:252px;width:1px;height:19px;background:#dcdcdc;"></div>
<div class="a" style="left:1145px;top:252px;width:1px;height:19px;background:#dcdcdc;"></div>
<div class="a" style="left:1197px;top:252px;width:1px;height:19px;background:#dcdcdc;"></div>
<div class="a" style="left:1315px;top:252px;width:1px;height:19px;background:#dcdcdc;"></div>
<div class="a" style="left:1368px;top:252px;width:1px;height:19px;background:#dcdcdc;"></div>
<div class="a" style="left:1475px;top:252px;width:1px;height:19px;background:#dcdcdc;"></div>
<div class="a" style="left:659.5px;top:272px;width:1px;height:42px;background:#c8c8c8;"></div>
<div class="a" style="left:866.5px;top:293px;width:1px;height:20.5px;background:#6aa2d8;"></div>
<div class="a" style="left:1080px;top:293px;width:1px;height:20.5px;background:#6aa2d8;"></div>
<div class="a" style="left:1145px;top:293px;width:1px;height:20.5px;background:#6aa2d8;"></div>
<div class="a" style="left:1197px;top:293px;width:1px;height:20.5px;background:#6aa2d8;"></div>
<div class="a" style="left:1475px;top:293px;width:1px;height:20.5px;background:#6aa2d8;"></div>
<div class="a" style="left:631.5px;top:274.5px;width:14px;height:14px;background:#fff;border:1px solid #333;"></div>
<svg style="left:631.5px;top:274.5px" width="14" height="14" viewBox="0 0 14 14"><path d="M2.500 7l3 3.300 6-7.500" stroke="#222" stroke-width="1.300" fill="none"/></svg>
<div class="a" style="left:631.5px;top:296px;width:14px;height:14px;background:#fff;border:1px solid #333;"></div>
<svg style="left:631.5px;top:296px" width="14" height="14" viewBox="0 0 14 14"><path d="M2.500 7l3 3.300 6-7.500" stroke="#222" stroke-width="1.300" fill="none"/></svg>
<div class="a" style="left:847px;top:294.5px;width:18px;height:17px;background:#e1e1e1;border:1px solid #adadad;"></div>
<div class="a" style="left:1125px;top:294.5px;width:18.5px;height:17.5px;background:#e1e1e1;border:1px solid #adadad;"></div>
<svg style="left:1128.5px;top:300.5px" width="11" height="7"><path d="M.8 .8l4.700 4.700 4.700-4.700" stroke="#222" stroke-width="1.500" fill="none"/></svg>
<div class="a" style="left:1147.5px;top:296px;width:30.5px;height:14.5px;background:#fff;border:1px solid #111;"></div>
<svg style="left:1148.5px;top:297px" width="28.5" height="12.5"><path d="M0 12.500L28.500 0" stroke="#e02020" stroke-width="1"/></svg>
<div class="a" style="left:1179px;top:294.5px;width:17.5px;height:17.5px;background:#e1e1e1;border:1px solid #adadad;"></div>
<svg style="left:1182px;top:300.5px" width="11" height="7"><path d="M.8 .8l4.700 4.700 4.700-4.700" stroke="#222" stroke-width="1.500" fill="none"/></svg>
<div class="a" style="left:1296.5px;top:294.5px;width:17.5px;height:17.5px;background:#e1e1e1;border:1px solid #adadad;"></div>
<svg style="left:1299.5px;top:300.5px" width="11" height="7"><path d="M.8 .8l4.700 4.700 4.700-4.700" stroke="#222" stroke-width="1.500" fill="none"/></svg>
<div class="a" style="left:1316.5px;top:293px;width:51.5px;height:20.5px;background:#e1e1e1;border:1px solid #adadad;"></div>
<div class="a" style="left:616px;top:331px;width:77.5px;height:20.5px;background:#e1e1e1;border:1px solid #adadad;"></div>
<div class="a" style="left:696px;top:331px;width:77px;height:20.5px;background:#e1e1e1;border:1px solid #adadad;"></div>
<div class="a" style="left:776px;top:331px;width:21px;height:20.5px;background:#cccccc;border:1px solid #bfbfbf;"></div>
<div class="a" style="left:800px;top:331px;width:21px;height:20.5px;background:#cccccc;border:1px solid #bfbfbf;"></div>
<svg style="left:781px;top:334px" width="11" height="15"><path d="M5.500 1l4 5h-2.500v8h-3v-8h-2.500z" fill="#d8d8d8" stroke="#9a9a9a" stroke-width=".9"/></svg>
<svg style="left:805px;top:334px" width="11" height="15"><path d="M5.500 14l4-5h-2.500v-8h-3v8h-2.500z" fill="#d8d8d8" stroke="#9a9a9a" stroke-width=".9"/></svg>
<div class="a" style="left:823.5px;top:331px;width:61px;height:20.5px;background:#e1e1e1;border:1px solid #adadad;"></div>
<div class="a" style="left:616px;top:354.5px;width:101px;height:20.5px;background:#e1e1e1;border:1px solid #adadad;"></div>
<div class="a" style="left:719.5px;top:354.5px;width:101px;height:20.5px;background:#e1e1e1;border:1px solid #adadad;"></div>
<div class="a" style="left:823.5px;top:354.5px;width:61px;height:20.5px;background:#e1e1e1;border:1px solid #adadad;"></div>
<div class="a" style="left:887.5px;top:354.5px;width:61.5px;height:20.5px;background:#e1e1e1;border:1px solid #adadad;"></div>
<div class="a" style="left:617px;top:389.5px;width:170.5px;height:20.5px;background:#e1e1e1;border:1px solid #adadad;"></div>
<div class="a" style="left:1504px;top:340px;width:166.5px;height:36px;border:1px solid #dcdcdc;"></div>
<div class="a" style="left:1510px;top:334px;width:104px;height:12px;background:#f0f0f0;"></div>
<svg style="left:1598.5px;top:332.5px" width="14" height="14" viewBox="0 0 15 15"><circle cx="7.500" cy="7.500" r="7" fill="#3d62c4" stroke="#a9b9e6" stroke-width="1.200"/><text x="7.500" y="11.500" font-size="11" font-weight="bold" fill="#fff" text-anchor="middle" font-family="Liberation Sans, sans-serif">?</text></svg>
<div class="a" style="left:1508.5px;top:350px;width:77px;height:20.5px;background:#e1e1e1;border:1px solid #adadad;"></div>
<div class="a" style="left:1588.5px;top:350px;width:77.5px;height:20.5px;background:#cccccc;border:1px solid #bfbfbf;"></div>
<div class="a" style="left:1503px;top:389.5px;width:77.5px;height:20.5px;background:#e1e1e1;border:1px solid #adadad;"></div>
<div class="a" style="left:1590px;top:389.5px;width:77px;height:20.5px;background:#e1e1e1;border:1px solid #adadad;"></div>
<svg style="left:1671px;top:414px" width="9" height="9"><g fill="#b8b8b8"><rect x="6" y="0" width="2" height="2"/><rect x="3" y="3" width="2" height="2"/><rect x="6" y="3" width="2" height="2"/><rect x="0" y="6" width="2" height="2"/><rect x="3" y="6" width="2" height="2"/><rect x="6" y="6" width="2" height="2"/></g></svg>
<svg class="tl" width="2048" height="1155" style="left:0;top:0" font-family="Liberation Sans, sans-serif" font-size="13" fill="#111">
<text x="613" y="226" textLength="87" lengthAdjust="spacingAndGlyphs" fill="#dbe8f5" font-size="12">外部参照の設定</text>
<text x="625" y="265.66" textLength="25" lengthAdjust="spacingAndGlyphs" font-size="12.48">参照</text>
<text x="666" y="265.66" textLength="26" lengthAdjust="spacingAndGlyphs" font-size="12.48">名前</text>
<text x="873" y="265.66" textLength="20" lengthAdjust="spacingAndGlyphs" font-size="12.48">パス</text>
<text x="1087" y="265.66" textLength="46" lengthAdjust="spacingAndGlyphs" font-size="12.48">保存パス</text>
<text x="1151" y="265.66" textLength="12.5" lengthAdjust="spacingAndGlyphs" font-size="12.48">色</text>
<text x="1204" y="265.66" textLength="25" lengthAdjust="spacingAndGlyphs" font-size="12.48">原点</text>
<text x="1322" y="265.66" textLength="25" lengthAdjust="spacingAndGlyphs" font-size="12.48">設定</text>
<text x="1375" y="265.66" textLength="28" lengthAdjust="spacingAndGlyphs" font-size="12.48">フロア</text>
<text x="1482" y="265.66" textLength="52" lengthAdjust="spacingAndGlyphs" font-size="12.48">参照状態</text>
<text x="662" y="286.66" textLength="79" lengthAdjust="spacingAndGlyphs" font-size="12.48">グループ未設定</text>
<text x="683" y="307.66" textLength="158" lengthAdjust="spacingAndGlyphs" fill="#fff" font-size="12.48">スリーブ図完成_第3回オンライ...</text>
<text x="852" y="309.2" textLength="8" lengthAdjust="spacingAndGlyphs" font-size="9.6">...</text>
<text x="868" y="307.66" textLength="72" lengthAdjust="spacingAndGlyphs" fill="#dbe8f5" font-size="12.48">（同じフォルダ）</text>
<text x="1082" y="307.66" textLength="25" lengthAdjust="spacingAndGlyphs" fill="#fff" font-size="12.48">相対</text>
<text x="1200" y="307.66" textLength="93" lengthAdjust="spacingAndGlyphs" fill="#fff" font-size="12.48">-11426.9025249...</text>
<text x="1329.75" y="307.71" textLength="25" lengthAdjust="spacingAndGlyphs" font-size="12.48">設定</text>
<text x="1478" y="307.66" textLength="38" lengthAdjust="spacingAndGlyphs" fill="#fff" font-size="12.48">参照中</text>
<text x="626.75" y="345.71" textLength="56" lengthAdjust="spacingAndGlyphs" font-size="12.48">すべて選択</text>
<text x="706.5" y="345.71" textLength="56" lengthAdjust="spacingAndGlyphs" font-size="12.48">すべて解除</text>
<text x="841.5" y="345.71" textLength="25" lengthAdjust="spacingAndGlyphs" font-size="12.48">更新</text>
<text x="628" y="369.21" textLength="77" lengthAdjust="spacingAndGlyphs" font-size="12.48">グループの追加</text>
<text x="726" y="369.21" textLength="88" lengthAdjust="spacingAndGlyphs" font-size="12.48">参照図面の追加</text>
<text x="841.5" y="369.21" textLength="25" lengthAdjust="spacingAndGlyphs" font-size="12.48">複写</text>
<text x="905.75" y="369.21" textLength="25" lengthAdjust="spacingAndGlyphs" font-size="12.48">削除</text>
<text x="634.5" y="404.16" textLength="117" lengthAdjust="spacingAndGlyphs" font-size="12.48">設定の読み込み・保存</text>
<path d="M774 397.25h10l-5 5.5z" fill="#111"/>
<text x="1512" y="343.66" textLength="82" lengthAdjust="spacingAndGlyphs" font-size="12.48">図面の取り込み</text>
<text x="1525" y="364.71" textLength="44" lengthAdjust="spacingAndGlyphs" font-size="12.48">取り込み</text>
<text x="1614.75" y="364.71" textLength="25" lengthAdjust="spacingAndGlyphs" fill="#8a8a8a" font-size="12.48">解除</text>
<text x="1533.75" y="404.21" textLength="16" lengthAdjust="spacingAndGlyphs" font-size="12.48">OK</text>
<text x="1603.5" y="404.21" textLength="50" lengthAdjust="spacingAndGlyphs" font-size="12.48">キャンセル</text>
</svg>
<div class="a" style="left:1249px;top:425px;width:433.5px;height:351px;background:#f0f0f0;border:1px solid #3d8cd0;"></div>
<div class="a" style="left:1249px;top:425px;width:433.5px;height:33px;background:#1e73be;"></div>
<svg style="left:1660px;top:436px" width="12" height="12"><path d="M.7 .7l10.500 10.500M11.200 .7l-10.500 10.500" stroke="#fff" stroke-width="1.200"/></svg>
<div class="a" style="left:1260.5px;top:477px;width:411.5px;height:106.5px;border:1px solid #dcdcdc;"></div>
<div class="a" style="left:1266px;top:470px;width:69px;height:12px;background:#f0f0f0;"></div>
<svg style="left:1268px;top:490.5px" width="14" height="14"><circle cx="7" cy="7" r="6.300" fill="#fff" stroke="#333" stroke-width="1"/></svg>
<svg style="left:1498.5px;top:490px" width="15" height="15"><circle cx="7.500" cy="7.500" r="7" fill="#3d62c4" stroke="#a9b9e6" stroke-width="1.200"/><text x="7.500" y="11.500" font-size="11" font-weight="bold" fill="#fff" text-anchor="middle" font-family="Liberation Sans, sans-serif">?</text></svg>
<svg style="left:1268px;top:513.5px" width="14" height="14"><circle cx="7" cy="7" r="6.300" fill="#fff" stroke="#333" stroke-width="1"/><circle cx="7" cy="7" r="3.400" fill="#222"/></svg>
<svg style="left:1498.5px;top:513.5px" width="15" height="15"><circle cx="7.500" cy="7.500" r="7" fill="#3d62c4" stroke="#a9b9e6" stroke-width="1.200"/><text x="7.500" y="11.500" font-size="11" font-weight="bold" fill="#fff" text-anchor="middle" font-family="Liberation Sans, sans-serif">?</text></svg>
<div class="a" style="left:1372.5px;top:534.5px;width:234.5px;height:20.5px;background:#fff;border:1px solid #7a7a7a;"></div>
<div class="a" style="left:1590.5px;top:535.5px;width:15.5px;height:18.5px;background:#f0f0f0;border:1px solid #c0c0c0;"></div>
<svg style="left:1593.5px;top:542px" width="10" height="6.5"><path d="M.7 .8l4.300 4.300 4.300-4.300" stroke="#555" stroke-width="1.200" fill="none"/></svg>
<div class="a" style="left:1288px;top:557.5px;width:83.5px;height:20.5px;background:#e1e1e1;border:1px solid #adadad;"></div>
<div class="a" style="left:1260.5px;top:594.5px;width:411.5px;height:83px;border:1px solid #dcdcdc;"></div>
<div class="a" style="left:1266px;top:588px;width:152px;height:14px;background:#f0f0f0;"></div>
<div class="a" style="left:1268px;top:588.5px;width:13.5px;height:13.5px;background:#fff;border:1px solid #333;"></div>
<div class="a" style="left:1265px;top:628px;width:141.5px;height:20.5px;background:#f0f0f0;border:1px solid #b4b4b4;"></div>
<div class="a" style="left:1391px;top:629px;width:14.5px;height:18.5px;background:#cccccc;"></div>
<svg style="left:1393.5px;top:635.5px" width="10" height="6.5"><path d="M.7 .8l4.300 4.300 4.300-4.300" stroke="#aaa" stroke-width="1.200" fill="none"/></svg>
<div class="a" style="left:1437px;top:628px;width:141.5px;height:20.5px;background:#f0f0f0;border:1px solid #b4b4b4;"></div>
<div class="a" style="left:1563px;top:629px;width:14.5px;height:18.5px;background:#cccccc;"></div>
<svg style="left:1565.5px;top:635.5px" width="10" height="6.5"><path d="M.7 .8l4.300 4.300 4.300-4.300" stroke="#aaa" stroke-width="1.200" fill="none"/></svg>
<svg style="left:1415px;top:633px" width="15" height="10"><path d="M1 5h12M9.500 1.500l3.500 3.500-3.500 3.500" stroke="#9a9a9a" stroke-width="1.100" fill="none"/></svg>
<div class="a" style="left:1265px;top:651.5px;width:83px;height:21px;background:#cccccc;border:1px solid #bfbfbf;"></div>
<div class="a" style="left:1260.5px;top:688.5px;width:411.5px;height:36px;border:1px solid #dcdcdc;"></div>
<div class="a" style="left:1267px;top:682px;width:45px;height:12px;background:#f0f0f0;"></div>
<div class="a" style="left:1268px;top:701.5px;width:13.5px;height:13.5px;background:#fff;border:1px solid #333;"></div>
<div class="a" style="left:1503.5px;top:740.5px;width:77px;height:20.5px;background:#e1e1e1;border:1px solid #adadad;"></div>
<div class="a" style="left:1590px;top:740.5px;width:77.5px;height:20.5px;background:#e1e1e1;border:1px solid #adadad;"></div>
<svg class="tl" width="2048" height="1155" style="left:0;top:0" font-family="Liberation Sans, sans-serif" font-size="13" fill="#111">
<text x="1259" y="446.5" textLength="74" lengthAdjust="spacingAndGlyphs" fill="#dbe8f5" font-size="12">読み込み設定</text>
<text x="1268" y="480.16" textLength="64" lengthAdjust="spacingAndGlyphs" font-size="12.48">ビューの参照</text>
<text x="1287.5" y="501.66" textLength="187" lengthAdjust="spacingAndGlyphs" font-size="12.48">同名のビュー/基準の表現を参照する</text>
<text x="1287.5" y="525.16" textLength="164" lengthAdjust="spacingAndGlyphs" font-size="12.48">指定したビューの表現を参照する</text>
<text x="1293" y="548.66" textLength="40.5" lengthAdjust="spacingAndGlyphs" font-size="12.48">ビュー名</text>
<text x="1375.5" y="548.5" textLength="119" lengthAdjust="spacingAndGlyphs" font-size="12">スリーブ図 1/40 [平面]</text>
<text x="1317.25" y="572.21" textLength="25" lengthAdjust="spacingAndGlyphs" font-size="12.48">設定</text>
<text x="1287.5" y="599.66" textLength="125" lengthAdjust="spacingAndGlyphs" font-size="12.48">要素の基準フロアの変更</text>
<text x="1269.5" y="619.16" textLength="50.5" lengthAdjust="spacingAndGlyphs" fill="#8a8a8a" font-size="12.48">元のフロア</text>
<text x="1442" y="619.16" textLength="77" lengthAdjust="spacingAndGlyphs" fill="#8a8a8a" font-size="12.48">変更後のフロア</text>
<text x="1269" y="642.5" textLength="18" lengthAdjust="spacingAndGlyphs" fill="#8a8a8a" font-size="12">1FL</text>
<text x="1441" y="642.5" textLength="18" lengthAdjust="spacingAndGlyphs" fill="#8a8a8a" font-size="12">1FL</text>
<text x="1279.5" y="666.46" textLength="54" lengthAdjust="spacingAndGlyphs" fill="#8a8a8a" font-size="12.48">フロア一覧</text>
<text x="1269.5" y="691.66" textLength="39.5" lengthAdjust="spacingAndGlyphs" font-size="12.48">レイヤー</text>
<text x="1287.5" y="712.66" textLength="193" lengthAdjust="spacingAndGlyphs" font-size="12.48">非表示レイヤーの要素を読み込まない</text>
<text x="1534" y="755.21" textLength="16" lengthAdjust="spacingAndGlyphs" font-size="12.48">OK</text>
<text x="1603.75" y="755.21" textLength="50" lengthAdjust="spacingAndGlyphs" font-size="12.48">キャンセル</text>
</svg>
</body>
</html>
